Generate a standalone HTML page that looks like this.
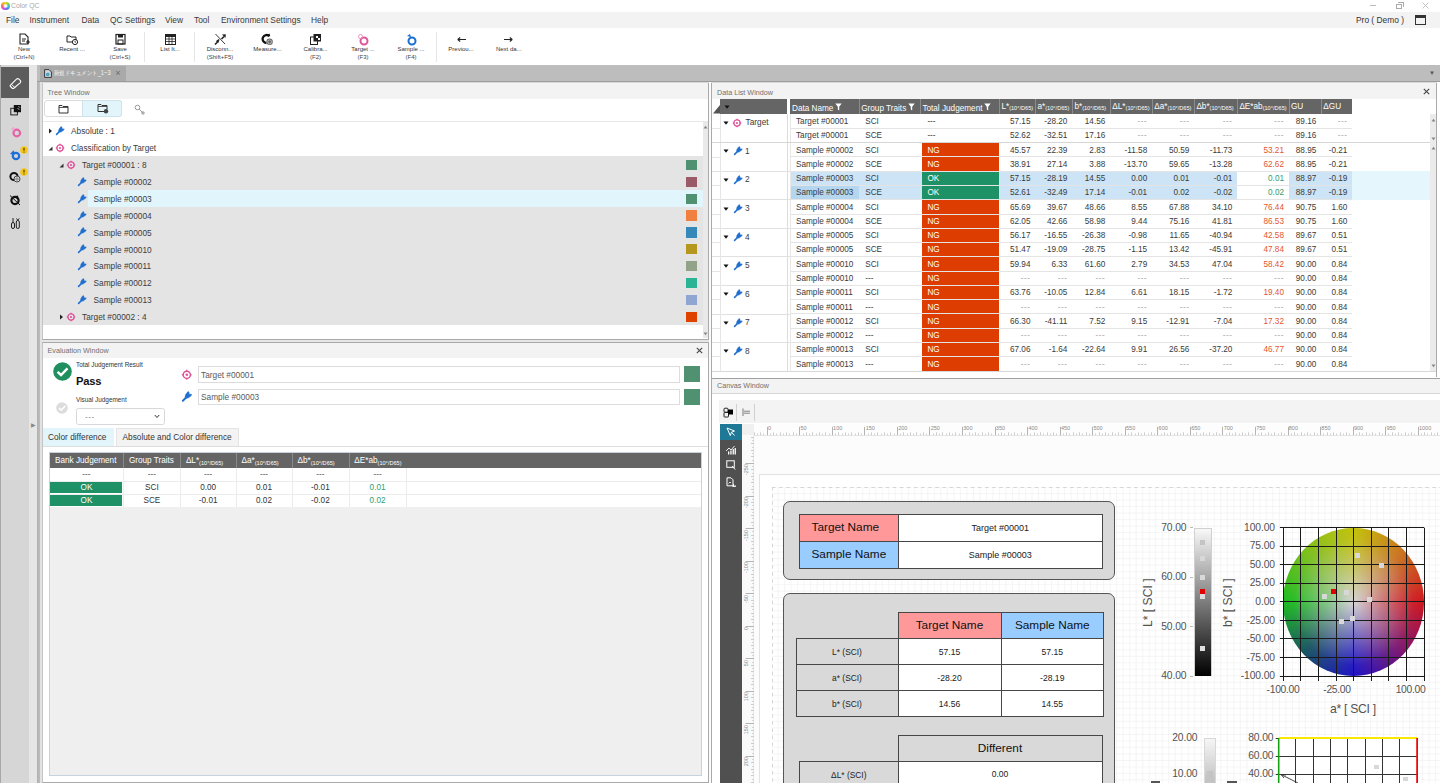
<!DOCTYPE html><html><head><meta charset="utf-8"><style>
*{box-sizing:border-box;margin:0;padding:0}
html,body{width:1440px;height:783px;overflow:hidden;background:#fff;font-family:"Liberation Sans",sans-serif;color:#333}
.a{position:absolute}
.t{position:absolute;white-space:nowrap;line-height:1}
.mi{position:absolute;top:16px;font-size:8.4px;color:#3a3a3a;line-height:9px;white-space:nowrap}
.tb{position:absolute;top:34px;width:60px;text-align:center;font-size:6px;color:#333;line-height:7.5px;white-space:nowrap}
.tbl{position:absolute;top:46px;width:60px;text-align:center;font-size:6px;color:#333;line-height:7.5px;white-space:nowrap}
.sep{position:absolute;top:32px;width:1px;height:30px;background:#e6e6e6}
.ph{position:absolute;background:#f3f3f3;font-size:7.2px;color:#707070}
.ph span{position:absolute;left:5px;top:4.5px;white-space:nowrap}
.tr{position:absolute;left:42px;height:17px;width:661px;font-size:8.3px;color:#3c3c3c}
.tr .tx{position:absolute;top:4px;white-space:nowrap}
.sw{position:absolute;left:645px;top:3px;width:11px;height:11px}
.dh{position:absolute;height:14.5px;background:#656565;color:#fff;font-size:8.2px;border-left:1px solid #8a8a8a}
.dh span{position:absolute;left:3px;top:3px;white-space:nowrap}
sub{font-size:5.6px;vertical-align:baseline;position:relative;top:1.3px}
.dr{position:absolute;height:14.25px;font-size:8.2px;color:#3a3a3a}
.c{position:absolute;top:0;height:14.25px;white-space:nowrap;line-height:14.25px}
.r{text-align:right;padding-right:5px}
.ng{background:#dd3d00;color:#fff}
.ok{background:#1f9166;color:#fff}
.red{color:#e4552e}
.grn{color:#2e9e6f}
.gy{color:#999}
</style></head><body>
<div class="a" style="left:1px;top:1.5px;width:8.5px;height:8.5px;border-radius:50%;background:radial-gradient(circle,#fff 0%,rgba(255,255,255,.9) 18%,rgba(255,255,255,0) 45%),conic-gradient(#f5d020,#7bd34a,#2bc0e0,#5a6ff0,#c25ae8,#f25a7a,#f5a030,#f5d020)"></div>
<div class="t" style="left:11px;top:3px;font-size:6.8px;color:#a8a8a8">Color QC</div>
<div class="a" style="left:1370px;top:5px;width:6px;height:1px;background:#bbb"></div>
<div class="a" style="left:1396px;top:3.5px;width:5.5px;height:5.5px;border:1px solid #aaa;background:#fff"></div>
<div class="a" style="left:1398px;top:1.5px;width:5.5px;height:5.5px;border-top:1px solid #aaa;border-right:1px solid #aaa"></div>
<svg class="a" style="left:1422px;top:2px" width="7" height="7" viewBox="0 0 7 7"><path d="M0.5 0.5L6.5 6.5M6.5 0.5L0.5 6.5" stroke="#bbb" stroke-width="0.9"/></svg>
<div class="a" style="left:0;top:12px;width:1440px;height:16px;background:#f3f3f3"></div>
<div class="mi" style="left:6px">File</div>
<div class="mi" style="left:29.5px">Instrument</div>
<div class="mi" style="left:81.5px">Data</div>
<div class="mi" style="left:110px">QC Settings</div>
<div class="mi" style="left:165px">View</div>
<div class="mi" style="left:194px">Tool</div>
<div class="mi" style="left:221px">Environment Settings</div>
<div class="mi" style="left:311px">Help</div>
<div class="t" style="left:1356px;top:16px;font-size:8.4px;color:#333">Pro ( Demo )</div>
<div class="a" style="left:1415px;top:15px;width:11px;height:10px;border:1.3px solid #333;border-top:3px solid #333"></div>
<svg class="a" style="left:17.5px;top:32.5px" width="13" height="13" viewBox="0 0 13 13"><path d="M2 1h5l3 3v7H2z" fill="none" stroke="#222" stroke-width="1.1"/><path d="M4 6h4M4 8h3" stroke="#222"/><path d="M8 9h4M10 7v4" stroke="#222" stroke-width="1.2"/></svg>
<div class="tb" style="left:-6px;top:46px">New</div>
<div class="tb" style="left:-6px;top:53.5px;color:#444">(Ctrl+N)</div>
<svg class="a" style="left:65.5px;top:32.5px" width="13" height="13" viewBox="0 0 13 13"><path d="M1 3h3l1 1h5v3M1 3v6h5" fill="none" stroke="#222" stroke-width="1"/><circle cx="9" cy="9" r="2.6" fill="#fff" stroke="#222"/><path d="M9 7.6v1.6h1" stroke="#222" stroke-width=".7" fill="none"/></svg>
<div class="tb" style="left:42px;top:46px">Recent ...</div>
<svg class="a" style="left:113.5px;top:32.5px" width="13" height="13" viewBox="0 0 13 13"><rect x="2" y="1.5" width="9" height="9.5" fill="none" stroke="#222" stroke-width="1.2"/><rect x="4" y="1.5" width="5" height="3" fill="#222"/><rect x="4" y="7" width="5" height="4" fill="none" stroke="#222"/></svg>
<div class="tb" style="left:90px;top:46px">Save</div>
<div class="tb" style="left:90px;top:53.5px;color:#444">(Ctrl+S)</div>
<svg class="a" style="left:163.5px;top:32.5px" width="13" height="13" viewBox="0 0 13 13"><rect x="1.5" y="1.5" width="10" height="10" fill="none" stroke="#222"/><rect x="1.5" y="1.5" width="10" height="2.5" fill="#222"/><path d="M1.5 6h10M1.5 8.5h10M5 4v7.5M8 4v7.5" stroke="#222" stroke-width=".8"/></svg>
<div class="tb" style="left:140px;top:46px">List It...</div>
<svg class="a" style="left:213.5px;top:32.5px" width="13" height="13" viewBox="0 0 13 13"><path d="M1.5 1L11 11" stroke="#222" stroke-width=".9"/><path d="M1 11.5L3 9.5M3.2 8.2L5.2 6.5" stroke="#222" stroke-width="1.6"/><circle cx="3.6" cy="8.6" r="1.3" fill="#222"/><path d="M7.5 6L10 3.5" stroke="#222" stroke-width="1.6"/><path d="M11.8 1.2L11.5 5L8 1.6Z" fill="#222"/></svg>
<div class="tb" style="left:190px;top:46px">Disconn...</div>
<div class="tb" style="left:190px;top:53.5px;color:#444">(Shift+F5)</div>
<svg class="a" style="left:261.0px;top:32.5px" width="13" height="13" viewBox="0 0 13 13"><path d="M8.5 3.2A4 4 0 1 0 5.5 10" fill="none" stroke="#111" stroke-width="2.3"/><path d="M6 1.2L9 0.8L8.2 3.5Z" fill="#111"/><circle cx="8.6" cy="8.8" r="3.2" fill="#666"/><circle cx="8.6" cy="8.8" r="1.9" fill="none" stroke="#ddd" stroke-width=".7"/></svg>
<div class="tb" style="left:237.5px;top:46px">Measure...</div>
<svg class="a" style="left:309.0px;top:32.5px" width="13" height="13" viewBox="0 0 13 13"><rect x="1.5" y="4" width="7" height="7.5" fill="#fff" stroke="#222"/><rect x="4.5" y="1" width="7.5" height="7.5" fill="#222"/><path d="M7 3h2v2h-2zM9 5h2v2h-2z" fill="#fff"/></svg>
<div class="tb" style="left:285.5px;top:46px">Calibra...</div>
<div class="tb" style="left:285.5px;top:53.5px;color:#444">(F2)</div>
<svg class="a" style="left:356.5px;top:32.5px" width="13" height="13" viewBox="0 0 13 13"><circle cx="7" cy="8" r="3.5" fill="none" stroke="#e0559a" stroke-width="2"/><circle cx="3.5" cy="3.5" r="2" fill="none" stroke="#e895bd" stroke-width="1"/></svg>
<div class="tb" style="left:333px;top:46px">Target ...</div>
<div class="tb" style="left:333px;top:53.5px;color:#444">(F3)</div>
<svg class="a" style="left:404.5px;top:32.5px" width="13" height="13" viewBox="0 0 13 13"><circle cx="7" cy="8" r="3.5" fill="none" stroke="#1a6fd1" stroke-width="2"/><path d="M2 3l3-2 1 3z" fill="#1a6fd1"/></svg>
<div class="tb" style="left:381px;top:46px">Sample ...</div>
<div class="tb" style="left:381px;top:53.5px;color:#444">(F4)</div>
<svg class="a" style="left:454.5px;top:32.5px" width="13" height="13" viewBox="0 0 13 13"><path d="M2.5 6.5h8.5M2.8 6.5l2.4-2M2.8 6.5l2.4 2" stroke="#222" stroke-width="1.1" fill="none"/></svg>
<div class="tb" style="left:431px;top:46px">Previou...</div>
<svg class="a" style="left:502.25px;top:32.5px" width="13" height="13" viewBox="0 0 13 13"><path d="M2 6.5h8.5M10.2 6.5l-2.4-2M10.2 6.5l-2.4 2" stroke="#222" stroke-width="1.1" fill="none"/></svg>
<div class="tb" style="left:478.75px;top:46px">Next da...</div>
<div class="sep" style="left:144px"></div>
<div class="sep" style="left:194px"></div>
<div class="sep" style="left:435.5px"></div>
<div class="a" style="left:0;top:65px;width:1440px;height:17px;background:#bdbdbd;border-bottom:1px solid #9c9c9c"></div>
<div class="a" style="left:40px;top:66px;width:86px;height:15px;background:#a9a9a9"></div>
<svg class="a" style="left:43.5px;top:69px" width="8" height="9" viewBox="0 0 8 9"><path d="M0.6 0.6H5L7.4 3V8.4H0.6Z" fill="#cfd8dc" stroke="#3a3a3a" stroke-width="1"/><path d="M2 4.5L4 3.5L5.8 5L4.5 7.2L2.2 6.8Z" fill="#3b9bd0"/><path d="M3 5L4.5 6" stroke="#7cc04b" stroke-width="1"/></svg>
<div class="t" style="left:54px;top:70.3px;font-size:6.3px;color:#f4f4f4;transform:scaleX(0.91);transform-origin:0 0">新規ドキュメント_1~3</div>
<div class="t" style="left:115.5px;top:69px;font-size:8.5px;color:#6a6a6a">×</div>
<div class="t" style="left:1429px;top:70px;font-size:6px;color:#555">▼</div>
<div class="a" style="left:0;top:65px;width:29px;height:718px;background:#d6d6d6;border-left:1px solid #a8a8a8"></div>
<div class="a" style="left:1px;top:66.5px;width:28px;height:31.5px;background:#5c5c5c"></div>
<div class="a" style="left:29px;top:65px;width:8px;height:718px;background:#e6e6e6"></div>
<div class="a" style="left:37px;top:82px;width:3px;height:701px;background:linear-gradient(90deg,#b0b0b0,#bdbdbd)"></div><div class="a" style="left:40px;top:82px;width:1.5px;height:701px;background:#e2e2e2"></div>
<div class="t" style="left:31px;top:422px;font-size:6px;color:#888">▶</div>
<div class="a" style="left:41.5px;top:82px;width:667.5px;height:258px;background:#fff;border:1px solid #a9a9a9;border-top:none;border-left-color:#c4c4c4"></div>
<div class="ph" style="left:42.5px;top:83px;width:665.5px;height:16px"><span>Tree Window</span></div>
<div class="a" style="left:43.8px;top:100.4px;width:78px;height:17px;border:1px solid #dcdcdc;border-radius:3px;background:#fff"></div>
<div class="a" style="left:82.4px;top:100.4px;width:39.4px;height:17px;border:1px solid #cfe3ea;border-radius:0 3px 3px 0;background:#e2f5fb"></div>
<svg class="a" style="left:58px;top:103.5px" width="11" height="10" viewBox="0 0 11 10"><path d="M1 1.5h3l1 1h5v6.5H1z" fill="none" stroke="#333" stroke-width="1"/><path d="M1 3.5h9" stroke="#333" stroke-width=".8"/></svg>
<svg class="a" style="left:96.5px;top:103px" width="12" height="11" viewBox="0 0 12 11"><path d="M1 1.5h3l1 1h5v4M1 1.5v7h6" fill="none" stroke="#333" stroke-width="1"/><path d="M1 3.5h9" stroke="#333" stroke-width=".8"/><circle cx="9" cy="8.3" r="2.2" fill="#444"/></svg>
<svg class="a" style="left:134px;top:103.5px" width="12" height="11" viewBox="0 0 12 11"><circle cx="3.5" cy="3.5" r="2.3" fill="none" stroke="#999" stroke-width="1"/><path d="M5.2 5.2L9 9M9 7v4M7 9h4" stroke="#999" stroke-width="1"/></svg>
<div class="a" style="left:42.5px;top:121px;width:665.5px;height:1px;background:#e8e8e8"></div>
<div class="a" style="left:703px;top:122px;width:5.2px;height:216px;background:#e9e9e9"></div>
<svg class="a" style="left:703px;top:125px" width="5" height="4" viewBox="0 0 5 4"><path d="M0.5 3.5H4.5L2.5 0.8Z" fill="#888"/></svg>
<svg class="a" style="left:703px;top:332px" width="5" height="4" viewBox="0 0 5 4"><path d="M0.5 0.5H4.5L2.5 3.2Z" fill="#888"/></svg>
<div class="a" style="left:42.5px;top:156.46px;width:660.5px;height:168.79999999999998px;background:#e4e4e4"></div>
<div class="a" style="left:88px;top:190.22px;width:615px;height:16.88px;background:#e0f6fc"></div>
<svg class="a" style="left:48px;top:128.14000000000001px" width="5" height="6" viewBox="0 0 5 6"><path d="M1 0.5L4 3L1 5.5Z" fill="#222"/></svg>
<svg class="a" style="left:55px;top:126.14000000000001px" width="10.0" height="10.0" viewBox="0 0 10 10"><path d="M1.6 8.4L4.2 5.8" stroke="#1f6fd0" stroke-width="1.6" stroke-linecap="round"/><path d="M3.4 5.2L4.0 3.0L6.0 0.5L6.9 0.9L7.1 2.8L9.3 2.9L8.6 4.3L6.1 6.1L4.4 6.3Z" fill="#1f6fd0" stroke="#1f6fd0" stroke-width=".4" stroke-linejoin="round"/></svg>
<div class="t" style="left:71px;top:127.34000000000002px;font-size:8.3px;color:#3c3c3c">Absolute : 1</div>
<svg class="a" style="left:47.5px;top:146.02px" width="5" height="5" viewBox="0 0 5 5"><path d="M4.5 0.5V4.5H0.5Z" fill="#333"/></svg>
<svg class="a" style="left:54.5px;top:143.02px" width="10.0" height="10.0" viewBox="0 0 10 10"><circle cx="5" cy="5" r="3.1" stroke="#e0559a" fill="none" stroke-width="1.3"/><circle cx="5" cy="5" r="1.1" fill="#e0559a"/><path d="M5 0.3L6 2L4 2ZM5 9.7L6 8L4 8ZM0.3 5L2 4V6ZM9.7 5L8 4V6Z" fill="#e0559a"/></svg>
<div class="t" style="left:71px;top:144.22px;font-size:8.3px;color:#3c3c3c">Classification by Target</div>
<svg class="a" style="left:58.5px;top:162.9px" width="5" height="5" viewBox="0 0 5 5"><path d="M4.5 0.5V4.5H0.5Z" fill="#333"/></svg>
<svg class="a" style="left:65.5px;top:159.9px" width="10.0" height="10.0" viewBox="0 0 10 10"><circle cx="5" cy="5" r="3.1" stroke="#e0559a" fill="none" stroke-width="1.3"/><circle cx="5" cy="5" r="1.1" fill="#e0559a"/><path d="M5 0.3L6 2L4 2ZM5 9.7L6 8L4 8ZM0.3 5L2 4V6ZM9.7 5L8 4V6Z" fill="#e0559a"/></svg>
<div class="t" style="left:82px;top:161.1px;font-size:8.3px;color:#3c3c3c">Target #00001 : 8</div>
<div class="a" style="left:686.4px;top:159.8px;width:10.7px;height:10.2px;background:#4f9170"></div>
<svg class="a" style="left:76.5px;top:176.78px" width="10.0" height="10.0" viewBox="0 0 10 10"><path d="M1.6 8.4L4.2 5.8" stroke="#1f6fd0" stroke-width="1.6" stroke-linecap="round"/><path d="M3.4 5.2L4.0 3.0L6.0 0.5L6.9 0.9L7.1 2.8L9.3 2.9L8.6 4.3L6.1 6.1L4.4 6.3Z" fill="#1f6fd0" stroke="#1f6fd0" stroke-width=".4" stroke-linejoin="round"/></svg>
<div class="t" style="left:93.5px;top:177.98px;font-size:8.3px;color:#3c3c3c">Sample #00002</div>
<div class="a" style="left:686.4px;top:176.68px;width:10.7px;height:10.2px;background:#9a5a66"></div>
<svg class="a" style="left:76.5px;top:193.66px" width="10.0" height="10.0" viewBox="0 0 10 10"><path d="M1.6 8.4L4.2 5.8" stroke="#1f6fd0" stroke-width="1.6" stroke-linecap="round"/><path d="M3.4 5.2L4.0 3.0L6.0 0.5L6.9 0.9L7.1 2.8L9.3 2.9L8.6 4.3L6.1 6.1L4.4 6.3Z" fill="#1f6fd0" stroke="#1f6fd0" stroke-width=".4" stroke-linejoin="round"/></svg>
<div class="t" style="left:93.5px;top:194.85999999999999px;font-size:8.3px;color:#3c3c3c">Sample #00003</div>
<div class="a" style="left:686.4px;top:193.56px;width:10.7px;height:10.2px;background:#4f9170"></div>
<svg class="a" style="left:76.5px;top:210.54px" width="10.0" height="10.0" viewBox="0 0 10 10"><path d="M1.6 8.4L4.2 5.8" stroke="#1f6fd0" stroke-width="1.6" stroke-linecap="round"/><path d="M3.4 5.2L4.0 3.0L6.0 0.5L6.9 0.9L7.1 2.8L9.3 2.9L8.6 4.3L6.1 6.1L4.4 6.3Z" fill="#1f6fd0" stroke="#1f6fd0" stroke-width=".4" stroke-linejoin="round"/></svg>
<div class="t" style="left:93.5px;top:211.73999999999998px;font-size:8.3px;color:#3c3c3c">Sample #00004</div>
<div class="a" style="left:686.4px;top:210.44px;width:10.7px;height:10.2px;background:#f08040"></div>
<svg class="a" style="left:76.5px;top:227.42000000000002px" width="10.0" height="10.0" viewBox="0 0 10 10"><path d="M1.6 8.4L4.2 5.8" stroke="#1f6fd0" stroke-width="1.6" stroke-linecap="round"/><path d="M3.4 5.2L4.0 3.0L6.0 0.5L6.9 0.9L7.1 2.8L9.3 2.9L8.6 4.3L6.1 6.1L4.4 6.3Z" fill="#1f6fd0" stroke="#1f6fd0" stroke-width=".4" stroke-linejoin="round"/></svg>
<div class="t" style="left:93.5px;top:228.62px;font-size:8.3px;color:#3c3c3c">Sample #00005</div>
<div class="a" style="left:686.4px;top:227.32000000000002px;width:10.7px;height:10.2px;background:#3588b8"></div>
<svg class="a" style="left:76.5px;top:244.3px" width="10.0" height="10.0" viewBox="0 0 10 10"><path d="M1.6 8.4L4.2 5.8" stroke="#1f6fd0" stroke-width="1.6" stroke-linecap="round"/><path d="M3.4 5.2L4.0 3.0L6.0 0.5L6.9 0.9L7.1 2.8L9.3 2.9L8.6 4.3L6.1 6.1L4.4 6.3Z" fill="#1f6fd0" stroke="#1f6fd0" stroke-width=".4" stroke-linejoin="round"/></svg>
<div class="t" style="left:93.5px;top:245.5px;font-size:8.3px;color:#3c3c3c">Sample #00010</div>
<div class="a" style="left:686.4px;top:244.20000000000002px;width:10.7px;height:10.2px;background:#b5961e"></div>
<svg class="a" style="left:76.5px;top:261.18px" width="10.0" height="10.0" viewBox="0 0 10 10"><path d="M1.6 8.4L4.2 5.8" stroke="#1f6fd0" stroke-width="1.6" stroke-linecap="round"/><path d="M3.4 5.2L4.0 3.0L6.0 0.5L6.9 0.9L7.1 2.8L9.3 2.9L8.6 4.3L6.1 6.1L4.4 6.3Z" fill="#1f6fd0" stroke="#1f6fd0" stroke-width=".4" stroke-linejoin="round"/></svg>
<div class="t" style="left:93.5px;top:262.38px;font-size:8.3px;color:#3c3c3c">Sample #00011</div>
<div class="a" style="left:686.4px;top:261.08px;width:10.7px;height:10.2px;background:#93a38a"></div>
<svg class="a" style="left:76.5px;top:278.06px" width="10.0" height="10.0" viewBox="0 0 10 10"><path d="M1.6 8.4L4.2 5.8" stroke="#1f6fd0" stroke-width="1.6" stroke-linecap="round"/><path d="M3.4 5.2L4.0 3.0L6.0 0.5L6.9 0.9L7.1 2.8L9.3 2.9L8.6 4.3L6.1 6.1L4.4 6.3Z" fill="#1f6fd0" stroke="#1f6fd0" stroke-width=".4" stroke-linejoin="round"/></svg>
<div class="t" style="left:93.5px;top:279.26px;font-size:8.3px;color:#3c3c3c">Sample #00012</div>
<div class="a" style="left:686.4px;top:277.96px;width:10.7px;height:10.2px;background:#2bb396"></div>
<svg class="a" style="left:76.5px;top:294.94px" width="10.0" height="10.0" viewBox="0 0 10 10"><path d="M1.6 8.4L4.2 5.8" stroke="#1f6fd0" stroke-width="1.6" stroke-linecap="round"/><path d="M3.4 5.2L4.0 3.0L6.0 0.5L6.9 0.9L7.1 2.8L9.3 2.9L8.6 4.3L6.1 6.1L4.4 6.3Z" fill="#1f6fd0" stroke="#1f6fd0" stroke-width=".4" stroke-linejoin="round"/></svg>
<div class="t" style="left:93.5px;top:296.14px;font-size:8.3px;color:#3c3c3c">Sample #00013</div>
<div class="a" style="left:686.4px;top:294.84px;width:10.7px;height:10.2px;background:#8fa6d3"></div>
<svg class="a" style="left:59px;top:313.82px" width="5" height="6" viewBox="0 0 5 6"><path d="M1 0.5L4 3L1 5.5Z" fill="#222"/></svg>
<svg class="a" style="left:65.5px;top:311.82px" width="10.0" height="10.0" viewBox="0 0 10 10"><circle cx="5" cy="5" r="3.1" stroke="#e0559a" fill="none" stroke-width="1.3"/><circle cx="5" cy="5" r="1.1" fill="#e0559a"/><path d="M5 0.3L6 2L4 2ZM5 9.7L6 8L4 8ZM0.3 5L2 4V6ZM9.7 5L8 4V6Z" fill="#e0559a"/></svg>
<div class="t" style="left:82px;top:313.02px;font-size:8.3px;color:#3c3c3c">Target #00002 : 4</div>
<div class="a" style="left:686.4px;top:311.71999999999997px;width:10.7px;height:10.2px;background:#de4200"></div>
<div class="a" style="left:41.5px;top:339.5px;width:667.5px;height:2.5px;background:#e6e6e6"></div>
<div class="a" style="left:41.5px;top:342px;width:667.5px;height:441px;background:#fff;border:1px solid #a9a9a9;border-left-color:#c4c4c4"></div>
<div class="ph" style="left:42.5px;top:343px;width:665.5px;height:14.5px"><span style="top:2.8px">Evaluation Window</span></div>
<svg class="a" style="left:695.7px;top:346.8px" width="7" height="7" viewBox="0 0 7 7"><path d="M0.8 0.8L6.2 6.2M6.2 0.8L0.8 6.2" stroke="#444" stroke-width="1.1"/></svg>
<svg class="a" style="left:52.5px;top:361.5px" width="19" height="19" viewBox="0 0 19 19"><circle cx="9.5" cy="9.5" r="9.3" fill="#1f8f5f"/><path d="M4.5 9.8L8 13L14.5 6.3" stroke="#fff" stroke-width="2.4" fill="none"/></svg>
<div class="t" style="left:76px;top:361.5px;font-size:6.4px;color:#333">Total Judgement Result</div>
<div class="t" style="left:76px;top:375.5px;font-size:11.2px;font-weight:bold;color:#111;letter-spacing:-0.2px">Pass</div>
<svg class="a" style="left:56px;top:402px" width="12" height="12" viewBox="0 0 12 12"><circle cx="6" cy="6" r="5.8" fill="#dcdcdc"/><path d="M3 6.2L5.2 8.2L9.2 4" stroke="#fff" stroke-width="1.6" fill="none"/></svg>
<div class="t" style="left:76px;top:396.5px;font-size:6.4px;color:#333">Visual Judgement</div>
<div class="a" style="left:76px;top:408px;width:88.5px;height:16.5px;border:1px solid #d8d8d8;border-radius:2.5px;background:#fff"></div>
<div class="t" style="left:85px;top:412.8px;font-size:8px;color:#777;letter-spacing:0.6px">---</div>
<svg class="a" style="left:153.5px;top:414px" width="6" height="5" viewBox="0 0 6 5"><path d="M0.8 1L3 3.5L5.2 1" stroke="#333" stroke-width="1" fill="none"/></svg>
<svg class="a" style="left:180.9px;top:368.5px" width="11.6" height="11.6" viewBox="0 0 10 10"><circle cx="5" cy="5" r="3.1" stroke="#e0559a" fill="none" stroke-width="1.3"/><circle cx="5" cy="5" r="1.1" fill="#e0559a"/><path d="M5 0.3L6 2L4 2ZM5 9.7L6 8L4 8ZM0.3 5L2 4V6ZM9.7 5L8 4V6Z" fill="#e0559a"/></svg>
<svg class="a" style="left:180.5px;top:390.5px" width="11.6" height="11.6" viewBox="0 0 10 10"><path d="M1.6 8.4L4.2 5.8" stroke="#1f6fd0" stroke-width="1.6" stroke-linecap="round"/><path d="M3.4 5.2L4.0 3.0L6.0 0.5L6.9 0.9L7.1 2.8L9.3 2.9L8.6 4.3L6.1 6.1L4.4 6.3Z" fill="#1f6fd0" stroke="#1f6fd0" stroke-width=".4" stroke-linejoin="round"/></svg>
<div class="a" style="left:197.5px;top:366px;width:482px;height:16.6px;border:1px solid #dcdcdc;background:#fff"></div>
<div class="t" style="left:201px;top:370.5px;font-size:8.3px;color:#5a5a5a">Target #00001</div>
<div class="a" style="left:684px;top:366px;width:16px;height:16px;background:#4f9170"></div>
<div class="a" style="left:197.5px;top:389px;width:482px;height:15.5px;border:1px solid #dcdcdc;background:#fff"></div>
<div class="t" style="left:201px;top:393px;font-size:8.3px;color:#5a5a5a">Sample #00003</div>
<div class="a" style="left:684px;top:389px;width:16px;height:16px;background:#4f9170"></div>
<div class="a" style="left:43px;top:428px;width:71px;height:17.5px;background:#e2f5fb"></div>
<div class="t" style="left:48px;top:433px;font-size:8.3px;color:#333">Color difference</div>
<div class="a" style="left:116.4px;top:428px;width:123px;height:17.5px;background:#f3f3f3;border:1px solid #e4e4e4;border-bottom:none"></div>
<div class="t" style="left:122.5px;top:433px;font-size:8.3px;color:#333">Absolute and Color difference</div>
<div class="a" style="left:42.5px;top:445.5px;width:665.5px;height:1px;background:#dedede"></div>
<div class="a" style="left:49px;top:452px;width:652.5px;height:324px;background:#efefef;border:1px solid #c6d3df"></div>
<div class="a" style="left:50px;top:453px;width:650.5px;height:14.7px;background:#656565"></div>
<div class="a" style="left:50px;top:467.7px;width:650.5px;height:39px;background:#fff"></div>
<div class="t" style="left:55.0px;top:457.3px;font-size:8.2px;color:#fff">Bank Judgement</div>
<div class="t" style="left:128.9px;top:457.3px;font-size:8.2px;color:#fff">Group Traits</div>
<div class="a" style="left:123.4px;top:453px;width:1px;height:14.7px;background:#8a8a8a"></div>
<div class="t" style="left:185.9px;top:457.3px;font-size:8.2px;color:#fff">ΔL*<sub>(10°/D65)</sub></div>
<div class="a" style="left:180.4px;top:453px;width:1px;height:14.7px;background:#8a8a8a"></div>
<div class="t" style="left:241.5px;top:457.3px;font-size:8.2px;color:#fff">Δa*<sub>(10°/D65)</sub></div>
<div class="a" style="left:236px;top:453px;width:1px;height:14.7px;background:#8a8a8a"></div>
<div class="t" style="left:297.5px;top:457.3px;font-size:8.2px;color:#fff">Δb*<sub>(10°/D65)</sub></div>
<div class="a" style="left:292px;top:453px;width:1px;height:14.7px;background:#8a8a8a"></div>
<div class="t" style="left:354.3px;top:457.3px;font-size:8.2px;color:#fff">ΔE*ab<sub>(10°/D65)</sub></div>
<div class="a" style="left:348.8px;top:453px;width:1px;height:14.7px;background:#8a8a8a"></div>
<div class="a" style="left:123.4px;top:467.7px;width:1px;height:39px;background:#ececec"></div>
<div class="a" style="left:180.4px;top:467.7px;width:1px;height:39px;background:#ececec"></div>
<div class="a" style="left:236px;top:467.7px;width:1px;height:39px;background:#ececec"></div>
<div class="a" style="left:292px;top:467.7px;width:1px;height:39px;background:#ececec"></div>
<div class="a" style="left:348.8px;top:467.7px;width:1px;height:39px;background:#ececec"></div>
<div class="a" style="left:406.3px;top:467.7px;width:1px;height:39px;background:#ececec"></div>
<div class="a" style="left:50px;top:481px;width:650.5px;height:1px;background:#ececec"></div>
<div class="a" style="left:50px;top:494px;width:650.5px;height:1px;background:#ececec"></div>
<div class="t" style="left:49.5px;width:73.9px;text-align:center;top:470.7px;font-size:8.2px;color:#555">---</div>
<div class="t" style="left:123.4px;width:57.0px;text-align:center;top:470.7px;font-size:8.2px;color:#555">---</div>
<div class="t" style="left:180.4px;width:55.599999999999994px;text-align:center;top:470.7px;font-size:8.2px;color:#555">---</div>
<div class="t" style="left:236px;width:56px;text-align:center;top:470.7px;font-size:8.2px;color:#555">---</div>
<div class="t" style="left:292px;width:56.80000000000001px;text-align:center;top:470.7px;font-size:8.2px;color:#555">---</div>
<div class="t" style="left:348.8px;width:57.5px;text-align:center;top:470.7px;font-size:8.2px;color:#555">---</div>
<div class="a" style="left:50px;top:481.7px;width:72px;height:11.5px;background:#1f9166"></div>
<div class="t" style="left:49.5px;width:73.9px;text-align:center;top:483.7px;font-size:8.2px;color:#fff">OK</div>
<div class="t" style="left:123.4px;width:57.0px;text-align:center;top:483.7px;font-size:8.2px;color:#333">SCI</div>
<div class="t" style="left:180.4px;width:55.599999999999994px;text-align:center;top:483.7px;font-size:8.2px;color:#333">0.00</div>
<div class="t" style="left:236px;width:56px;text-align:center;top:483.7px;font-size:8.2px;color:#333">0.01</div>
<div class="t" style="left:292px;width:56.80000000000001px;text-align:center;top:483.7px;font-size:8.2px;color:#333">-0.01</div>
<div class="t" style="left:348.8px;width:57.5px;text-align:center;top:483.7px;font-size:8.2px;color:#2e9e6f">0.01</div>
<div class="a" style="left:50px;top:494.7px;width:72px;height:11.5px;background:#1f9166"></div>
<div class="t" style="left:49.5px;width:73.9px;text-align:center;top:496.7px;font-size:8.2px;color:#fff">OK</div>
<div class="t" style="left:123.4px;width:57.0px;text-align:center;top:496.7px;font-size:8.2px;color:#333">SCE</div>
<div class="t" style="left:180.4px;width:55.599999999999994px;text-align:center;top:496.7px;font-size:8.2px;color:#333">-0.01</div>
<div class="t" style="left:236px;width:56px;text-align:center;top:496.7px;font-size:8.2px;color:#333">0.02</div>
<div class="t" style="left:292px;width:56.80000000000001px;text-align:center;top:496.7px;font-size:8.2px;color:#333">-0.02</div>
<div class="t" style="left:348.8px;width:57.5px;text-align:center;top:496.7px;font-size:8.2px;color:#2e9e6f">0.02</div>
<div class="a" style="left:709px;top:82px;width:2.5px;height:701px;background:#fbfbfb"></div>
<div class="a" style="left:711px;top:82px;width:726px;height:296px;background:#fff;border:1px solid #a9a9a9;border-top:none"></div>
<div class="ph" style="left:712px;top:83px;width:724px;height:16px"><span>Data List Window</span></div>
<svg class="a" style="left:1423px;top:88.3px" width="7" height="7" viewBox="0 0 7 7"><path d="M0.8 0.8L6.2 6.2M6.2 0.8L0.8 6.2" stroke="#444" stroke-width="1.1"/></svg>
<svg class="a" style="left:712.5px;top:105px" width="7" height="8.5" viewBox="0 0 7 8.5"><path d="M7 0V8.5H0Z" fill="#555"/></svg>
<div class="a" style="left:720.4px;top:99.2px;width:67.1px;height:14.549999999999997px;background:#656565"></div>
<svg class="a" style="left:723.5px;top:103.5px" width="6" height="6" viewBox="0 0 6 6"><path d="M0.5 1.5H5.5L3 4.8Z" fill="#111"/></svg>
<div class="a" style="left:790px;top:99.2px;width:562.4000000000001px;height:14.549999999999997px;background:#656565"></div>
<div class="t" style="left:792px;top:103px;font-size:8.2px;color:#fff">Data Name<svg width="7" height="8" viewBox="0 0 7 8" style="vertical-align:-0.5px;margin-left:2px"><path d="M0.3 0.5H6.7L4.2 3.8V7.5L2.8 6.6V3.8Z" fill="#fff"/></svg></div>
<div class="a" style="left:858.7px;top:99.2px;width:1px;height:15.049999999999997px;background:#8c8c8c"></div>
<div class="t" style="left:861.2px;top:103px;font-size:8.2px;color:#fff">Group Traits<svg width="7" height="8" viewBox="0 0 7 8" style="vertical-align:-0.5px;margin-left:2px"><path d="M0.3 0.5H6.7L4.2 3.8V7.5L2.8 6.6V3.8Z" fill="#fff"/></svg></div>
<div class="a" style="left:919.9px;top:99.2px;width:1px;height:15.049999999999997px;background:#8c8c8c"></div>
<div class="t" style="left:922.4px;top:103px;font-size:8.2px;color:#fff">Total Judgement<svg width="7" height="8" viewBox="0 0 7 8" style="vertical-align:-0.5px;margin-left:2px"><path d="M0.3 0.5H6.7L4.2 3.8V7.5L2.8 6.6V3.8Z" fill="#fff"/></svg></div>
<div class="a" style="left:998.9px;top:99.2px;width:1px;height:15.049999999999997px;background:#8c8c8c"></div>
<div class="t" style="left:1001.4px;top:103px;font-size:8.2px;color:#fff">L*<sub>(10°/D65)</sub></div>
<div class="a" style="left:1035.0px;top:99.2px;width:1px;height:15.049999999999997px;background:#8c8c8c"></div>
<div class="t" style="left:1037.5px;top:103px;font-size:8.2px;color:#fff">a*<sub>(10°/D65)</sub></div>
<div class="a" style="left:1071.9px;top:99.2px;width:1px;height:15.049999999999997px;background:#8c8c8c"></div>
<div class="t" style="left:1074.4px;top:103px;font-size:8.2px;color:#fff">b*<sub>(10°/D65)</sub></div>
<div class="a" style="left:1109.8px;top:99.2px;width:1px;height:15.049999999999997px;background:#8c8c8c"></div>
<div class="t" style="left:1112.3px;top:103px;font-size:8.2px;color:#fff">ΔL*<sub>(10°/D65)</sub></div>
<div class="a" style="left:1151.7px;top:99.2px;width:1px;height:15.049999999999997px;background:#8c8c8c"></div>
<div class="t" style="left:1154.2px;top:103px;font-size:8.2px;color:#fff">Δa*<sub>(10°/D65)</sub></div>
<div class="a" style="left:1193.9px;top:99.2px;width:1px;height:15.049999999999997px;background:#8c8c8c"></div>
<div class="t" style="left:1196.4px;top:103px;font-size:8.2px;color:#fff">Δb*<sub>(10°/D65)</sub></div>
<div class="a" style="left:1236.9px;top:99.2px;width:1px;height:15.049999999999997px;background:#8c8c8c"></div>
<div class="t" style="left:1239.4px;top:103px;font-size:8.2px;color:#fff">ΔE*ab<sub>(10°/D65)</sub></div>
<div class="a" style="left:1288.5px;top:99.2px;width:1px;height:15.049999999999997px;background:#8c8c8c"></div>
<div class="t" style="left:1291px;top:103px;font-size:8.2px;color:#fff">GU</div>
<div class="a" style="left:1320.8px;top:99.2px;width:1px;height:15.049999999999997px;background:#8c8c8c"></div>
<div class="t" style="left:1323.3px;top:103px;font-size:8.2px;color:#fff">ΔGU</div>
<div class="a" style="left:790px;top:171.32999999999998px;width:447.4000000000001px;height:14.27px;background:#cce4f6"></div>
<div class="a" style="left:1289px;top:171.32999999999998px;width:63.40000000000009px;height:14.27px;background:#cce4f6"></div>
<div class="a" style="left:1352.4px;top:171.32999999999998px;width:77.59999999999991px;height:14.27px;background:#e5f6fc"></div>
<div class="a" style="left:790px;top:185.6px;width:447.4000000000001px;height:14.27px;background:#cce4f6"></div>
<div class="a" style="left:1289px;top:185.6px;width:63.40000000000009px;height:14.27px;background:#cce4f6"></div>
<div class="a" style="left:1352.4px;top:185.6px;width:77.59999999999991px;height:14.27px;background:#e5f6fc"></div>
<div class="a" style="left:790px;top:185.6px;width:69.20000000000005px;height:14.27px;background:#b4d6ef"></div>
<div class="t" style="left:796px;top:118.05px;font-size:8.2px;color:#3a3a3a">Target #00001</div>
<div class="t" style="left:865.2px;top:118.05px;font-size:8.2px;color:#3a3a3a">SCI</div>
<div class="t" style="left:927.4px;top:118.05px;font-size:8.2px;color:#3a3a3a">---</div>
<div class="t" style="left:999.4px;width:31.100000000000023px;text-align:right;top:118.05px;font-size:8.2px;color:#3a3a3a;">57.15</div>
<div class="t" style="left:1035.5px;width:31.90000000000009px;text-align:right;top:118.05px;font-size:8.2px;color:#3a3a3a;">-28.20</div>
<div class="t" style="left:1072.4px;width:32.899999999999864px;text-align:right;top:118.05px;font-size:8.2px;color:#3a3a3a;">14.56</div>
<div class="t" style="left:1110.3px;width:36.90000000000009px;text-align:right;top:118.05px;font-size:8.2px;color:#a8a8a8;letter-spacing:0.5px;">---</div>
<div class="t" style="left:1152.2px;width:37.200000000000045px;text-align:right;top:118.05px;font-size:8.2px;color:#a8a8a8;letter-spacing:0.5px;">---</div>
<div class="t" style="left:1194.4px;width:38.0px;text-align:right;top:118.05px;font-size:8.2px;color:#a8a8a8;letter-spacing:0.5px;">---</div>
<div class="t" style="left:1237.4px;width:46.59999999999991px;text-align:right;top:118.05px;font-size:8.2px;color:#a8a8a8;letter-spacing:0.5px;">---</div>
<div class="t" style="left:1289px;width:27.299999999999955px;text-align:right;top:118.05px;font-size:8.2px;color:#3a3a3a;">89.16</div>
<div class="t" style="left:1321.3px;width:26.100000000000136px;text-align:right;top:118.05px;font-size:8.2px;color:#a8a8a8;letter-spacing:0.5px;">---</div>
<div class="t" style="left:796px;top:132.32000000000002px;font-size:8.2px;color:#3a3a3a">Target #00001</div>
<div class="t" style="left:865.2px;top:132.32000000000002px;font-size:8.2px;color:#3a3a3a">SCE</div>
<div class="t" style="left:927.4px;top:132.32000000000002px;font-size:8.2px;color:#3a3a3a">---</div>
<div class="t" style="left:999.4px;width:31.100000000000023px;text-align:right;top:132.32000000000002px;font-size:8.2px;color:#3a3a3a;">52.62</div>
<div class="t" style="left:1035.5px;width:31.90000000000009px;text-align:right;top:132.32000000000002px;font-size:8.2px;color:#3a3a3a;">-32.51</div>
<div class="t" style="left:1072.4px;width:32.899999999999864px;text-align:right;top:132.32000000000002px;font-size:8.2px;color:#3a3a3a;">17.16</div>
<div class="t" style="left:1110.3px;width:36.90000000000009px;text-align:right;top:132.32000000000002px;font-size:8.2px;color:#a8a8a8;letter-spacing:0.5px;">---</div>
<div class="t" style="left:1152.2px;width:37.200000000000045px;text-align:right;top:132.32000000000002px;font-size:8.2px;color:#a8a8a8;letter-spacing:0.5px;">---</div>
<div class="t" style="left:1194.4px;width:38.0px;text-align:right;top:132.32000000000002px;font-size:8.2px;color:#a8a8a8;letter-spacing:0.5px;">---</div>
<div class="t" style="left:1237.4px;width:46.59999999999991px;text-align:right;top:132.32000000000002px;font-size:8.2px;color:#a8a8a8;letter-spacing:0.5px;">---</div>
<div class="t" style="left:1289px;width:27.299999999999955px;text-align:right;top:132.32000000000002px;font-size:8.2px;color:#3a3a3a;">89.16</div>
<div class="t" style="left:1321.3px;width:26.100000000000136px;text-align:right;top:132.32000000000002px;font-size:8.2px;color:#a8a8a8;letter-spacing:0.5px;">---</div>
<div class="t" style="left:796px;top:146.59px;font-size:8.2px;color:#3a3a3a">Sample #00002</div>
<div class="t" style="left:865.2px;top:146.59px;font-size:8.2px;color:#3a3a3a">SCI</div>
<div class="a" style="left:921.9px;top:142.79px;width:77.5px;height:14.27px;background:#dd3d00"></div>
<div class="t" style="left:927.4px;top:146.59px;font-size:8.2px;color:#fff">NG</div>
<div class="t" style="left:999.4px;width:31.100000000000023px;text-align:right;top:146.59px;font-size:8.2px;color:#3a3a3a;">45.57</div>
<div class="t" style="left:1035.5px;width:31.90000000000009px;text-align:right;top:146.59px;font-size:8.2px;color:#3a3a3a;">22.39</div>
<div class="t" style="left:1072.4px;width:32.899999999999864px;text-align:right;top:146.59px;font-size:8.2px;color:#3a3a3a;">2.83</div>
<div class="t" style="left:1110.3px;width:36.90000000000009px;text-align:right;top:146.59px;font-size:8.2px;color:#3a3a3a;">-11.58</div>
<div class="t" style="left:1152.2px;width:37.200000000000045px;text-align:right;top:146.59px;font-size:8.2px;color:#3a3a3a;">50.59</div>
<div class="t" style="left:1194.4px;width:38.0px;text-align:right;top:146.59px;font-size:8.2px;color:#3a3a3a;">-11.73</div>
<div class="t" style="left:1237.4px;width:46.59999999999991px;text-align:right;top:146.59px;font-size:8.2px;color:#e4552e;">53.21</div>
<div class="t" style="left:1289px;width:27.299999999999955px;text-align:right;top:146.59px;font-size:8.2px;color:#3a3a3a;">88.95</div>
<div class="t" style="left:1321.3px;width:26.100000000000136px;text-align:right;top:146.59px;font-size:8.2px;color:#3a3a3a;">-0.21</div>
<div class="t" style="left:796px;top:160.86px;font-size:8.2px;color:#3a3a3a">Sample #00002</div>
<div class="t" style="left:865.2px;top:160.86px;font-size:8.2px;color:#3a3a3a">SCE</div>
<div class="a" style="left:921.9px;top:157.06px;width:77.5px;height:14.27px;background:#dd3d00"></div>
<div class="t" style="left:927.4px;top:160.86px;font-size:8.2px;color:#fff">NG</div>
<div class="t" style="left:999.4px;width:31.100000000000023px;text-align:right;top:160.86px;font-size:8.2px;color:#3a3a3a;">38.91</div>
<div class="t" style="left:1035.5px;width:31.90000000000009px;text-align:right;top:160.86px;font-size:8.2px;color:#3a3a3a;">27.14</div>
<div class="t" style="left:1072.4px;width:32.899999999999864px;text-align:right;top:160.86px;font-size:8.2px;color:#3a3a3a;">3.88</div>
<div class="t" style="left:1110.3px;width:36.90000000000009px;text-align:right;top:160.86px;font-size:8.2px;color:#3a3a3a;">-13.70</div>
<div class="t" style="left:1152.2px;width:37.200000000000045px;text-align:right;top:160.86px;font-size:8.2px;color:#3a3a3a;">59.65</div>
<div class="t" style="left:1194.4px;width:38.0px;text-align:right;top:160.86px;font-size:8.2px;color:#3a3a3a;">-13.28</div>
<div class="t" style="left:1237.4px;width:46.59999999999991px;text-align:right;top:160.86px;font-size:8.2px;color:#e4552e;">62.62</div>
<div class="t" style="left:1289px;width:27.299999999999955px;text-align:right;top:160.86px;font-size:8.2px;color:#3a3a3a;">88.95</div>
<div class="t" style="left:1321.3px;width:26.100000000000136px;text-align:right;top:160.86px;font-size:8.2px;color:#3a3a3a;">-0.21</div>
<div class="t" style="left:796px;top:175.13px;font-size:8.2px;color:#3a3a3a">Sample #00003</div>
<div class="t" style="left:865.2px;top:175.13px;font-size:8.2px;color:#3a3a3a">SCI</div>
<div class="a" style="left:921.9px;top:171.32999999999998px;width:77.5px;height:14.27px;background:#1f9166"></div>
<div class="t" style="left:927.4px;top:175.13px;font-size:8.2px;color:#fff">OK</div>
<div class="t" style="left:999.4px;width:31.100000000000023px;text-align:right;top:175.13px;font-size:8.2px;color:#3a3a3a;">57.15</div>
<div class="t" style="left:1035.5px;width:31.90000000000009px;text-align:right;top:175.13px;font-size:8.2px;color:#3a3a3a;">-28.19</div>
<div class="t" style="left:1072.4px;width:32.899999999999864px;text-align:right;top:175.13px;font-size:8.2px;color:#3a3a3a;">14.55</div>
<div class="t" style="left:1110.3px;width:36.90000000000009px;text-align:right;top:175.13px;font-size:8.2px;color:#3a3a3a;">0.00</div>
<div class="t" style="left:1152.2px;width:37.200000000000045px;text-align:right;top:175.13px;font-size:8.2px;color:#3a3a3a;">0.01</div>
<div class="t" style="left:1194.4px;width:38.0px;text-align:right;top:175.13px;font-size:8.2px;color:#3a3a3a;">-0.01</div>
<div class="t" style="left:1237.4px;width:46.59999999999991px;text-align:right;top:175.13px;font-size:8.2px;color:#2e9e6f;">0.01</div>
<div class="t" style="left:1289px;width:27.299999999999955px;text-align:right;top:175.13px;font-size:8.2px;color:#3a3a3a;">88.97</div>
<div class="t" style="left:1321.3px;width:26.100000000000136px;text-align:right;top:175.13px;font-size:8.2px;color:#3a3a3a;">-0.19</div>
<div class="t" style="left:796px;top:189.4px;font-size:8.2px;color:#3a3a3a">Sample #00003</div>
<div class="t" style="left:865.2px;top:189.4px;font-size:8.2px;color:#3a3a3a">SCE</div>
<div class="a" style="left:921.9px;top:185.6px;width:77.5px;height:14.27px;background:#1f9166"></div>
<div class="t" style="left:927.4px;top:189.4px;font-size:8.2px;color:#fff">OK</div>
<div class="t" style="left:999.4px;width:31.100000000000023px;text-align:right;top:189.4px;font-size:8.2px;color:#3a3a3a;">52.61</div>
<div class="t" style="left:1035.5px;width:31.90000000000009px;text-align:right;top:189.4px;font-size:8.2px;color:#3a3a3a;">-32.49</div>
<div class="t" style="left:1072.4px;width:32.899999999999864px;text-align:right;top:189.4px;font-size:8.2px;color:#3a3a3a;">17.14</div>
<div class="t" style="left:1110.3px;width:36.90000000000009px;text-align:right;top:189.4px;font-size:8.2px;color:#3a3a3a;">-0.01</div>
<div class="t" style="left:1152.2px;width:37.200000000000045px;text-align:right;top:189.4px;font-size:8.2px;color:#3a3a3a;">0.02</div>
<div class="t" style="left:1194.4px;width:38.0px;text-align:right;top:189.4px;font-size:8.2px;color:#3a3a3a;">-0.02</div>
<div class="t" style="left:1237.4px;width:46.59999999999991px;text-align:right;top:189.4px;font-size:8.2px;color:#2e9e6f;">0.02</div>
<div class="t" style="left:1289px;width:27.299999999999955px;text-align:right;top:189.4px;font-size:8.2px;color:#3a3a3a;">88.97</div>
<div class="t" style="left:1321.3px;width:26.100000000000136px;text-align:right;top:189.4px;font-size:8.2px;color:#3a3a3a;">-0.19</div>
<div class="t" style="left:796px;top:203.67000000000002px;font-size:8.2px;color:#3a3a3a">Sample #00004</div>
<div class="t" style="left:865.2px;top:203.67000000000002px;font-size:8.2px;color:#3a3a3a">SCI</div>
<div class="a" style="left:921.9px;top:199.87px;width:77.5px;height:14.27px;background:#dd3d00"></div>
<div class="t" style="left:927.4px;top:203.67000000000002px;font-size:8.2px;color:#fff">NG</div>
<div class="t" style="left:999.4px;width:31.100000000000023px;text-align:right;top:203.67000000000002px;font-size:8.2px;color:#3a3a3a;">65.69</div>
<div class="t" style="left:1035.5px;width:31.90000000000009px;text-align:right;top:203.67000000000002px;font-size:8.2px;color:#3a3a3a;">39.67</div>
<div class="t" style="left:1072.4px;width:32.899999999999864px;text-align:right;top:203.67000000000002px;font-size:8.2px;color:#3a3a3a;">48.66</div>
<div class="t" style="left:1110.3px;width:36.90000000000009px;text-align:right;top:203.67000000000002px;font-size:8.2px;color:#3a3a3a;">8.55</div>
<div class="t" style="left:1152.2px;width:37.200000000000045px;text-align:right;top:203.67000000000002px;font-size:8.2px;color:#3a3a3a;">67.88</div>
<div class="t" style="left:1194.4px;width:38.0px;text-align:right;top:203.67000000000002px;font-size:8.2px;color:#3a3a3a;">34.10</div>
<div class="t" style="left:1237.4px;width:46.59999999999991px;text-align:right;top:203.67000000000002px;font-size:8.2px;color:#e4552e;">76.44</div>
<div class="t" style="left:1289px;width:27.299999999999955px;text-align:right;top:203.67000000000002px;font-size:8.2px;color:#3a3a3a;">90.75</div>
<div class="t" style="left:1321.3px;width:26.100000000000136px;text-align:right;top:203.67000000000002px;font-size:8.2px;color:#3a3a3a;">1.60</div>
<div class="t" style="left:796px;top:217.94px;font-size:8.2px;color:#3a3a3a">Sample #00004</div>
<div class="t" style="left:865.2px;top:217.94px;font-size:8.2px;color:#3a3a3a">SCE</div>
<div class="a" style="left:921.9px;top:214.14px;width:77.5px;height:14.27px;background:#dd3d00"></div>
<div class="t" style="left:927.4px;top:217.94px;font-size:8.2px;color:#fff">NG</div>
<div class="t" style="left:999.4px;width:31.100000000000023px;text-align:right;top:217.94px;font-size:8.2px;color:#3a3a3a;">62.05</div>
<div class="t" style="left:1035.5px;width:31.90000000000009px;text-align:right;top:217.94px;font-size:8.2px;color:#3a3a3a;">42.66</div>
<div class="t" style="left:1072.4px;width:32.899999999999864px;text-align:right;top:217.94px;font-size:8.2px;color:#3a3a3a;">58.98</div>
<div class="t" style="left:1110.3px;width:36.90000000000009px;text-align:right;top:217.94px;font-size:8.2px;color:#3a3a3a;">9.44</div>
<div class="t" style="left:1152.2px;width:37.200000000000045px;text-align:right;top:217.94px;font-size:8.2px;color:#3a3a3a;">75.16</div>
<div class="t" style="left:1194.4px;width:38.0px;text-align:right;top:217.94px;font-size:8.2px;color:#3a3a3a;">41.81</div>
<div class="t" style="left:1237.4px;width:46.59999999999991px;text-align:right;top:217.94px;font-size:8.2px;color:#e4552e;">86.53</div>
<div class="t" style="left:1289px;width:27.299999999999955px;text-align:right;top:217.94px;font-size:8.2px;color:#3a3a3a;">90.75</div>
<div class="t" style="left:1321.3px;width:26.100000000000136px;text-align:right;top:217.94px;font-size:8.2px;color:#3a3a3a;">1.60</div>
<div class="t" style="left:796px;top:232.21px;font-size:8.2px;color:#3a3a3a">Sample #00005</div>
<div class="t" style="left:865.2px;top:232.21px;font-size:8.2px;color:#3a3a3a">SCI</div>
<div class="a" style="left:921.9px;top:228.41px;width:77.5px;height:14.27px;background:#dd3d00"></div>
<div class="t" style="left:927.4px;top:232.21px;font-size:8.2px;color:#fff">NG</div>
<div class="t" style="left:999.4px;width:31.100000000000023px;text-align:right;top:232.21px;font-size:8.2px;color:#3a3a3a;">56.17</div>
<div class="t" style="left:1035.5px;width:31.90000000000009px;text-align:right;top:232.21px;font-size:8.2px;color:#3a3a3a;">-16.55</div>
<div class="t" style="left:1072.4px;width:32.899999999999864px;text-align:right;top:232.21px;font-size:8.2px;color:#3a3a3a;">-26.38</div>
<div class="t" style="left:1110.3px;width:36.90000000000009px;text-align:right;top:232.21px;font-size:8.2px;color:#3a3a3a;">-0.98</div>
<div class="t" style="left:1152.2px;width:37.200000000000045px;text-align:right;top:232.21px;font-size:8.2px;color:#3a3a3a;">11.65</div>
<div class="t" style="left:1194.4px;width:38.0px;text-align:right;top:232.21px;font-size:8.2px;color:#3a3a3a;">-40.94</div>
<div class="t" style="left:1237.4px;width:46.59999999999991px;text-align:right;top:232.21px;font-size:8.2px;color:#e4552e;">42.58</div>
<div class="t" style="left:1289px;width:27.299999999999955px;text-align:right;top:232.21px;font-size:8.2px;color:#3a3a3a;">89.67</div>
<div class="t" style="left:1321.3px;width:26.100000000000136px;text-align:right;top:232.21px;font-size:8.2px;color:#3a3a3a;">0.51</div>
<div class="t" style="left:796px;top:246.48000000000002px;font-size:8.2px;color:#3a3a3a">Sample #00005</div>
<div class="t" style="left:865.2px;top:246.48000000000002px;font-size:8.2px;color:#3a3a3a">SCE</div>
<div class="a" style="left:921.9px;top:242.68px;width:77.5px;height:14.27px;background:#dd3d00"></div>
<div class="t" style="left:927.4px;top:246.48000000000002px;font-size:8.2px;color:#fff">NG</div>
<div class="t" style="left:999.4px;width:31.100000000000023px;text-align:right;top:246.48000000000002px;font-size:8.2px;color:#3a3a3a;">51.47</div>
<div class="t" style="left:1035.5px;width:31.90000000000009px;text-align:right;top:246.48000000000002px;font-size:8.2px;color:#3a3a3a;">-19.09</div>
<div class="t" style="left:1072.4px;width:32.899999999999864px;text-align:right;top:246.48000000000002px;font-size:8.2px;color:#3a3a3a;">-28.75</div>
<div class="t" style="left:1110.3px;width:36.90000000000009px;text-align:right;top:246.48000000000002px;font-size:8.2px;color:#3a3a3a;">-1.15</div>
<div class="t" style="left:1152.2px;width:37.200000000000045px;text-align:right;top:246.48000000000002px;font-size:8.2px;color:#3a3a3a;">13.42</div>
<div class="t" style="left:1194.4px;width:38.0px;text-align:right;top:246.48000000000002px;font-size:8.2px;color:#3a3a3a;">-45.91</div>
<div class="t" style="left:1237.4px;width:46.59999999999991px;text-align:right;top:246.48000000000002px;font-size:8.2px;color:#e4552e;">47.84</div>
<div class="t" style="left:1289px;width:27.299999999999955px;text-align:right;top:246.48000000000002px;font-size:8.2px;color:#3a3a3a;">89.67</div>
<div class="t" style="left:1321.3px;width:26.100000000000136px;text-align:right;top:246.48000000000002px;font-size:8.2px;color:#3a3a3a;">0.51</div>
<div class="t" style="left:796px;top:260.75px;font-size:8.2px;color:#3a3a3a">Sample #00010</div>
<div class="t" style="left:865.2px;top:260.75px;font-size:8.2px;color:#3a3a3a">SCI</div>
<div class="a" style="left:921.9px;top:256.95px;width:77.5px;height:14.27px;background:#dd3d00"></div>
<div class="t" style="left:927.4px;top:260.75px;font-size:8.2px;color:#fff">NG</div>
<div class="t" style="left:999.4px;width:31.100000000000023px;text-align:right;top:260.75px;font-size:8.2px;color:#3a3a3a;">59.94</div>
<div class="t" style="left:1035.5px;width:31.90000000000009px;text-align:right;top:260.75px;font-size:8.2px;color:#3a3a3a;">6.33</div>
<div class="t" style="left:1072.4px;width:32.899999999999864px;text-align:right;top:260.75px;font-size:8.2px;color:#3a3a3a;">61.60</div>
<div class="t" style="left:1110.3px;width:36.90000000000009px;text-align:right;top:260.75px;font-size:8.2px;color:#3a3a3a;">2.79</div>
<div class="t" style="left:1152.2px;width:37.200000000000045px;text-align:right;top:260.75px;font-size:8.2px;color:#3a3a3a;">34.53</div>
<div class="t" style="left:1194.4px;width:38.0px;text-align:right;top:260.75px;font-size:8.2px;color:#3a3a3a;">47.04</div>
<div class="t" style="left:1237.4px;width:46.59999999999991px;text-align:right;top:260.75px;font-size:8.2px;color:#e4552e;">58.42</div>
<div class="t" style="left:1289px;width:27.299999999999955px;text-align:right;top:260.75px;font-size:8.2px;color:#3a3a3a;">90.00</div>
<div class="t" style="left:1321.3px;width:26.100000000000136px;text-align:right;top:260.75px;font-size:8.2px;color:#3a3a3a;">0.84</div>
<div class="t" style="left:796px;top:275.02000000000004px;font-size:8.2px;color:#3a3a3a">Sample #00010</div>
<div class="t" style="left:865.2px;top:275.02000000000004px;font-size:8.2px;color:#3a3a3a">---</div>
<div class="a" style="left:921.9px;top:271.22px;width:77.5px;height:14.27px;background:#dd3d00"></div>
<div class="t" style="left:927.4px;top:275.02000000000004px;font-size:8.2px;color:#fff">NG</div>
<div class="t" style="left:999.4px;width:31.100000000000023px;text-align:right;top:275.02000000000004px;font-size:8.2px;color:#a8a8a8;letter-spacing:0.5px;">---</div>
<div class="t" style="left:1035.5px;width:31.90000000000009px;text-align:right;top:275.02000000000004px;font-size:8.2px;color:#a8a8a8;letter-spacing:0.5px;">---</div>
<div class="t" style="left:1072.4px;width:32.899999999999864px;text-align:right;top:275.02000000000004px;font-size:8.2px;color:#a8a8a8;letter-spacing:0.5px;">---</div>
<div class="t" style="left:1110.3px;width:36.90000000000009px;text-align:right;top:275.02000000000004px;font-size:8.2px;color:#a8a8a8;letter-spacing:0.5px;">---</div>
<div class="t" style="left:1152.2px;width:37.200000000000045px;text-align:right;top:275.02000000000004px;font-size:8.2px;color:#a8a8a8;letter-spacing:0.5px;">---</div>
<div class="t" style="left:1194.4px;width:38.0px;text-align:right;top:275.02000000000004px;font-size:8.2px;color:#a8a8a8;letter-spacing:0.5px;">---</div>
<div class="t" style="left:1237.4px;width:46.59999999999991px;text-align:right;top:275.02000000000004px;font-size:8.2px;color:#a8a8a8;letter-spacing:0.5px;">---</div>
<div class="t" style="left:1289px;width:27.299999999999955px;text-align:right;top:275.02000000000004px;font-size:8.2px;color:#3a3a3a;">90.00</div>
<div class="t" style="left:1321.3px;width:26.100000000000136px;text-align:right;top:275.02000000000004px;font-size:8.2px;color:#3a3a3a;">0.84</div>
<div class="t" style="left:796px;top:289.29px;font-size:8.2px;color:#3a3a3a">Sample #00011</div>
<div class="t" style="left:865.2px;top:289.29px;font-size:8.2px;color:#3a3a3a">SCI</div>
<div class="a" style="left:921.9px;top:285.49px;width:77.5px;height:14.27px;background:#dd3d00"></div>
<div class="t" style="left:927.4px;top:289.29px;font-size:8.2px;color:#fff">NG</div>
<div class="t" style="left:999.4px;width:31.100000000000023px;text-align:right;top:289.29px;font-size:8.2px;color:#3a3a3a;">63.76</div>
<div class="t" style="left:1035.5px;width:31.90000000000009px;text-align:right;top:289.29px;font-size:8.2px;color:#3a3a3a;">-10.05</div>
<div class="t" style="left:1072.4px;width:32.899999999999864px;text-align:right;top:289.29px;font-size:8.2px;color:#3a3a3a;">12.84</div>
<div class="t" style="left:1110.3px;width:36.90000000000009px;text-align:right;top:289.29px;font-size:8.2px;color:#3a3a3a;">6.61</div>
<div class="t" style="left:1152.2px;width:37.200000000000045px;text-align:right;top:289.29px;font-size:8.2px;color:#3a3a3a;">18.15</div>
<div class="t" style="left:1194.4px;width:38.0px;text-align:right;top:289.29px;font-size:8.2px;color:#3a3a3a;">-1.72</div>
<div class="t" style="left:1237.4px;width:46.59999999999991px;text-align:right;top:289.29px;font-size:8.2px;color:#e4552e;">19.40</div>
<div class="t" style="left:1289px;width:27.299999999999955px;text-align:right;top:289.29px;font-size:8.2px;color:#3a3a3a;">90.00</div>
<div class="t" style="left:1321.3px;width:26.100000000000136px;text-align:right;top:289.29px;font-size:8.2px;color:#3a3a3a;">0.84</div>
<div class="t" style="left:796px;top:303.56px;font-size:8.2px;color:#3a3a3a">Sample #00011</div>
<div class="t" style="left:865.2px;top:303.56px;font-size:8.2px;color:#3a3a3a">---</div>
<div class="a" style="left:921.9px;top:299.76px;width:77.5px;height:14.27px;background:#dd3d00"></div>
<div class="t" style="left:927.4px;top:303.56px;font-size:8.2px;color:#fff">NG</div>
<div class="t" style="left:999.4px;width:31.100000000000023px;text-align:right;top:303.56px;font-size:8.2px;color:#a8a8a8;letter-spacing:0.5px;">---</div>
<div class="t" style="left:1035.5px;width:31.90000000000009px;text-align:right;top:303.56px;font-size:8.2px;color:#a8a8a8;letter-spacing:0.5px;">---</div>
<div class="t" style="left:1072.4px;width:32.899999999999864px;text-align:right;top:303.56px;font-size:8.2px;color:#a8a8a8;letter-spacing:0.5px;">---</div>
<div class="t" style="left:1110.3px;width:36.90000000000009px;text-align:right;top:303.56px;font-size:8.2px;color:#a8a8a8;letter-spacing:0.5px;">---</div>
<div class="t" style="left:1152.2px;width:37.200000000000045px;text-align:right;top:303.56px;font-size:8.2px;color:#a8a8a8;letter-spacing:0.5px;">---</div>
<div class="t" style="left:1194.4px;width:38.0px;text-align:right;top:303.56px;font-size:8.2px;color:#a8a8a8;letter-spacing:0.5px;">---</div>
<div class="t" style="left:1237.4px;width:46.59999999999991px;text-align:right;top:303.56px;font-size:8.2px;color:#a8a8a8;letter-spacing:0.5px;">---</div>
<div class="t" style="left:1289px;width:27.299999999999955px;text-align:right;top:303.56px;font-size:8.2px;color:#3a3a3a;">90.00</div>
<div class="t" style="left:1321.3px;width:26.100000000000136px;text-align:right;top:303.56px;font-size:8.2px;color:#3a3a3a;">0.84</div>
<div class="t" style="left:796px;top:317.83px;font-size:8.2px;color:#3a3a3a">Sample #00012</div>
<div class="t" style="left:865.2px;top:317.83px;font-size:8.2px;color:#3a3a3a">SCI</div>
<div class="a" style="left:921.9px;top:314.03px;width:77.5px;height:14.27px;background:#dd3d00"></div>
<div class="t" style="left:927.4px;top:317.83px;font-size:8.2px;color:#fff">NG</div>
<div class="t" style="left:999.4px;width:31.100000000000023px;text-align:right;top:317.83px;font-size:8.2px;color:#3a3a3a;">66.30</div>
<div class="t" style="left:1035.5px;width:31.90000000000009px;text-align:right;top:317.83px;font-size:8.2px;color:#3a3a3a;">-41.11</div>
<div class="t" style="left:1072.4px;width:32.899999999999864px;text-align:right;top:317.83px;font-size:8.2px;color:#3a3a3a;">7.52</div>
<div class="t" style="left:1110.3px;width:36.90000000000009px;text-align:right;top:317.83px;font-size:8.2px;color:#3a3a3a;">9.15</div>
<div class="t" style="left:1152.2px;width:37.200000000000045px;text-align:right;top:317.83px;font-size:8.2px;color:#3a3a3a;">-12.91</div>
<div class="t" style="left:1194.4px;width:38.0px;text-align:right;top:317.83px;font-size:8.2px;color:#3a3a3a;">-7.04</div>
<div class="t" style="left:1237.4px;width:46.59999999999991px;text-align:right;top:317.83px;font-size:8.2px;color:#e4552e;">17.32</div>
<div class="t" style="left:1289px;width:27.299999999999955px;text-align:right;top:317.83px;font-size:8.2px;color:#3a3a3a;">90.00</div>
<div class="t" style="left:1321.3px;width:26.100000000000136px;text-align:right;top:317.83px;font-size:8.2px;color:#3a3a3a;">0.84</div>
<div class="t" style="left:796px;top:332.09999999999997px;font-size:8.2px;color:#3a3a3a">Sample #00012</div>
<div class="t" style="left:865.2px;top:332.09999999999997px;font-size:8.2px;color:#3a3a3a">---</div>
<div class="a" style="left:921.9px;top:328.29999999999995px;width:77.5px;height:14.27px;background:#dd3d00"></div>
<div class="t" style="left:927.4px;top:332.09999999999997px;font-size:8.2px;color:#fff">NG</div>
<div class="t" style="left:999.4px;width:31.100000000000023px;text-align:right;top:332.09999999999997px;font-size:8.2px;color:#a8a8a8;letter-spacing:0.5px;">---</div>
<div class="t" style="left:1035.5px;width:31.90000000000009px;text-align:right;top:332.09999999999997px;font-size:8.2px;color:#a8a8a8;letter-spacing:0.5px;">---</div>
<div class="t" style="left:1072.4px;width:32.899999999999864px;text-align:right;top:332.09999999999997px;font-size:8.2px;color:#a8a8a8;letter-spacing:0.5px;">---</div>
<div class="t" style="left:1110.3px;width:36.90000000000009px;text-align:right;top:332.09999999999997px;font-size:8.2px;color:#a8a8a8;letter-spacing:0.5px;">---</div>
<div class="t" style="left:1152.2px;width:37.200000000000045px;text-align:right;top:332.09999999999997px;font-size:8.2px;color:#a8a8a8;letter-spacing:0.5px;">---</div>
<div class="t" style="left:1194.4px;width:38.0px;text-align:right;top:332.09999999999997px;font-size:8.2px;color:#a8a8a8;letter-spacing:0.5px;">---</div>
<div class="t" style="left:1237.4px;width:46.59999999999991px;text-align:right;top:332.09999999999997px;font-size:8.2px;color:#a8a8a8;letter-spacing:0.5px;">---</div>
<div class="t" style="left:1289px;width:27.299999999999955px;text-align:right;top:332.09999999999997px;font-size:8.2px;color:#3a3a3a;">90.00</div>
<div class="t" style="left:1321.3px;width:26.100000000000136px;text-align:right;top:332.09999999999997px;font-size:8.2px;color:#3a3a3a;">0.84</div>
<div class="t" style="left:796px;top:346.37px;font-size:8.2px;color:#3a3a3a">Sample #00013</div>
<div class="t" style="left:865.2px;top:346.37px;font-size:8.2px;color:#3a3a3a">SCI</div>
<div class="a" style="left:921.9px;top:342.57px;width:77.5px;height:14.27px;background:#dd3d00"></div>
<div class="t" style="left:927.4px;top:346.37px;font-size:8.2px;color:#fff">NG</div>
<div class="t" style="left:999.4px;width:31.100000000000023px;text-align:right;top:346.37px;font-size:8.2px;color:#3a3a3a;">67.06</div>
<div class="t" style="left:1035.5px;width:31.90000000000009px;text-align:right;top:346.37px;font-size:8.2px;color:#3a3a3a;">-1.64</div>
<div class="t" style="left:1072.4px;width:32.899999999999864px;text-align:right;top:346.37px;font-size:8.2px;color:#3a3a3a;">-22.64</div>
<div class="t" style="left:1110.3px;width:36.90000000000009px;text-align:right;top:346.37px;font-size:8.2px;color:#3a3a3a;">9.91</div>
<div class="t" style="left:1152.2px;width:37.200000000000045px;text-align:right;top:346.37px;font-size:8.2px;color:#3a3a3a;">26.56</div>
<div class="t" style="left:1194.4px;width:38.0px;text-align:right;top:346.37px;font-size:8.2px;color:#3a3a3a;">-37.20</div>
<div class="t" style="left:1237.4px;width:46.59999999999991px;text-align:right;top:346.37px;font-size:8.2px;color:#e4552e;">46.77</div>
<div class="t" style="left:1289px;width:27.299999999999955px;text-align:right;top:346.37px;font-size:8.2px;color:#3a3a3a;">90.00</div>
<div class="t" style="left:1321.3px;width:26.100000000000136px;text-align:right;top:346.37px;font-size:8.2px;color:#3a3a3a;">0.84</div>
<div class="t" style="left:796px;top:360.64000000000004px;font-size:8.2px;color:#3a3a3a">Sample #00013</div>
<div class="t" style="left:865.2px;top:360.64000000000004px;font-size:8.2px;color:#3a3a3a">---</div>
<div class="a" style="left:921.9px;top:356.84000000000003px;width:77.5px;height:14.27px;background:#dd3d00"></div>
<div class="t" style="left:927.4px;top:360.64000000000004px;font-size:8.2px;color:#fff">NG</div>
<div class="t" style="left:999.4px;width:31.100000000000023px;text-align:right;top:360.64000000000004px;font-size:8.2px;color:#a8a8a8;letter-spacing:0.5px;">---</div>
<div class="t" style="left:1035.5px;width:31.90000000000009px;text-align:right;top:360.64000000000004px;font-size:8.2px;color:#a8a8a8;letter-spacing:0.5px;">---</div>
<div class="t" style="left:1072.4px;width:32.899999999999864px;text-align:right;top:360.64000000000004px;font-size:8.2px;color:#a8a8a8;letter-spacing:0.5px;">---</div>
<div class="t" style="left:1110.3px;width:36.90000000000009px;text-align:right;top:360.64000000000004px;font-size:8.2px;color:#a8a8a8;letter-spacing:0.5px;">---</div>
<div class="t" style="left:1152.2px;width:37.200000000000045px;text-align:right;top:360.64000000000004px;font-size:8.2px;color:#a8a8a8;letter-spacing:0.5px;">---</div>
<div class="t" style="left:1194.4px;width:38.0px;text-align:right;top:360.64000000000004px;font-size:8.2px;color:#a8a8a8;letter-spacing:0.5px;">---</div>
<div class="t" style="left:1237.4px;width:46.59999999999991px;text-align:right;top:360.64000000000004px;font-size:8.2px;color:#a8a8a8;letter-spacing:0.5px;">---</div>
<div class="t" style="left:1289px;width:27.299999999999955px;text-align:right;top:360.64000000000004px;font-size:8.2px;color:#3a3a3a;">90.00</div>
<div class="t" style="left:1321.3px;width:26.100000000000136px;text-align:right;top:360.64000000000004px;font-size:8.2px;color:#3a3a3a;">0.84</div>
<div class="a" style="left:790px;top:127.92000000000002px;width:562.4000000000001px;height:1px;background:#e4e4e4"></div>
<div class="a" style="left:790px;top:142.19000000000003px;width:562.4000000000001px;height:1px;background:#e4e4e4"></div>
<div class="a" style="left:790px;top:156.46px;width:562.4000000000001px;height:1px;background:#e4e4e4"></div>
<div class="a" style="left:790px;top:170.73000000000002px;width:562.4000000000001px;height:1px;background:#e4e4e4"></div>
<div class="a" style="left:790px;top:185.0px;width:562.4000000000001px;height:1px;background:#e4e4e4"></div>
<div class="a" style="left:790px;top:199.27px;width:562.4000000000001px;height:1px;background:#e4e4e4"></div>
<div class="a" style="left:790px;top:213.54000000000002px;width:562.4000000000001px;height:1px;background:#e4e4e4"></div>
<div class="a" style="left:790px;top:227.81px;width:562.4000000000001px;height:1px;background:#e4e4e4"></div>
<div class="a" style="left:790px;top:242.08px;width:562.4000000000001px;height:1px;background:#e4e4e4"></div>
<div class="a" style="left:790px;top:256.34999999999997px;width:562.4000000000001px;height:1px;background:#e4e4e4"></div>
<div class="a" style="left:790px;top:270.61999999999995px;width:562.4000000000001px;height:1px;background:#e4e4e4"></div>
<div class="a" style="left:790px;top:284.89px;width:562.4000000000001px;height:1px;background:#e4e4e4"></div>
<div class="a" style="left:790px;top:299.15999999999997px;width:562.4000000000001px;height:1px;background:#e4e4e4"></div>
<div class="a" style="left:790px;top:313.42999999999995px;width:562.4000000000001px;height:1px;background:#e4e4e4"></div>
<div class="a" style="left:790px;top:327.69999999999993px;width:562.4000000000001px;height:1px;background:#e4e4e4"></div>
<div class="a" style="left:790px;top:341.9699999999999px;width:562.4000000000001px;height:1px;background:#e4e4e4"></div>
<div class="a" style="left:790px;top:356.23999999999995px;width:562.4000000000001px;height:1px;background:#e4e4e4"></div>
<div class="a" style="left:790px;top:370.51px;width:562.4000000000001px;height:1px;background:#e4e4e4"></div>
<div class="a" style="left:787px;top:114.25px;width:1px;height:256.86px;background:#dcdcdc"></div>
<div class="a" style="left:789.5px;top:114.25px;width:1px;height:256.86px;background:#e6e6e6"></div>
<div class="a" style="left:711.5px;top:142.29px;width:78px;height:1px;background:#e0e0e0"></div>
<div class="a" style="left:711.5px;top:128.02px;width:8.5px;height:1px;background:#e4e4e4"></div>
<svg class="a" style="left:723px;top:119.885px" width="6" height="6" viewBox="0 0 6 6"><path d="M0.5 1.5H5.5L3 4.8Z" fill="#111"/></svg>
<svg class="a" style="left:732px;top:117.885px" width="10.0" height="10.0" viewBox="0 0 10 10"><circle cx="5" cy="5" r="3.1" stroke="#e0559a" fill="none" stroke-width="1.3"/><circle cx="5" cy="5" r="1.1" fill="#e0559a"/><path d="M5 0.3L6 2L4 2ZM5 9.7L6 8L4 8ZM0.3 5L2 4V6ZM9.7 5L8 4V6Z" fill="#e0559a"/></svg>
<div class="t" style="left:745.5px;top:118.385px;font-size:8.3px;color:#3a3a3a">Target</div>
<div class="a" style="left:711.5px;top:170.82999999999998px;width:78px;height:1px;background:#e0e0e0"></div>
<div class="a" style="left:711.5px;top:156.56px;width:8.5px;height:1px;background:#e4e4e4"></div>
<svg class="a" style="left:723px;top:148.42499999999998px" width="6" height="6" viewBox="0 0 6 6"><path d="M0.5 1.5H5.5L3 4.8Z" fill="#111"/></svg>
<svg class="a" style="left:732.5px;top:146.42499999999998px" width="10.0" height="10.0" viewBox="0 0 10 10"><path d="M1.6 8.4L4.2 5.8" stroke="#1f6fd0" stroke-width="1.6" stroke-linecap="round"/><path d="M3.4 5.2L4.0 3.0L6.0 0.5L6.9 0.9L7.1 2.8L9.3 2.9L8.6 4.3L6.1 6.1L4.4 6.3Z" fill="#1f6fd0" stroke="#1f6fd0" stroke-width=".4" stroke-linejoin="round"/></svg>
<div class="t" style="left:745px;top:146.92499999999998px;font-size:8.3px;color:#3a3a3a">1</div>
<div class="a" style="left:711.5px;top:199.36999999999998px;width:78px;height:1px;background:#e0e0e0"></div>
<div class="a" style="left:711.5px;top:185.1px;width:8.5px;height:1px;background:#e4e4e4"></div>
<svg class="a" style="left:723px;top:176.96499999999997px" width="6" height="6" viewBox="0 0 6 6"><path d="M0.5 1.5H5.5L3 4.8Z" fill="#111"/></svg>
<svg class="a" style="left:732.5px;top:174.96499999999997px" width="10.0" height="10.0" viewBox="0 0 10 10"><path d="M1.6 8.4L4.2 5.8" stroke="#1f6fd0" stroke-width="1.6" stroke-linecap="round"/><path d="M3.4 5.2L4.0 3.0L6.0 0.5L6.9 0.9L7.1 2.8L9.3 2.9L8.6 4.3L6.1 6.1L4.4 6.3Z" fill="#1f6fd0" stroke="#1f6fd0" stroke-width=".4" stroke-linejoin="round"/></svg>
<div class="t" style="left:745px;top:175.46499999999997px;font-size:8.3px;color:#3a3a3a">2</div>
<div class="a" style="left:711.5px;top:227.91px;width:78px;height:1px;background:#e0e0e0"></div>
<div class="a" style="left:711.5px;top:213.64000000000001px;width:8.5px;height:1px;background:#e4e4e4"></div>
<svg class="a" style="left:723px;top:205.505px" width="6" height="6" viewBox="0 0 6 6"><path d="M0.5 1.5H5.5L3 4.8Z" fill="#111"/></svg>
<svg class="a" style="left:732.5px;top:203.505px" width="10.0" height="10.0" viewBox="0 0 10 10"><path d="M1.6 8.4L4.2 5.8" stroke="#1f6fd0" stroke-width="1.6" stroke-linecap="round"/><path d="M3.4 5.2L4.0 3.0L6.0 0.5L6.9 0.9L7.1 2.8L9.3 2.9L8.6 4.3L6.1 6.1L4.4 6.3Z" fill="#1f6fd0" stroke="#1f6fd0" stroke-width=".4" stroke-linejoin="round"/></svg>
<div class="t" style="left:745px;top:204.005px;font-size:8.3px;color:#3a3a3a">3</div>
<div class="a" style="left:711.5px;top:256.45px;width:78px;height:1px;background:#e0e0e0"></div>
<div class="a" style="left:711.5px;top:242.18px;width:8.5px;height:1px;background:#e4e4e4"></div>
<svg class="a" style="left:723px;top:234.045px" width="6" height="6" viewBox="0 0 6 6"><path d="M0.5 1.5H5.5L3 4.8Z" fill="#111"/></svg>
<svg class="a" style="left:732.5px;top:232.045px" width="10.0" height="10.0" viewBox="0 0 10 10"><path d="M1.6 8.4L4.2 5.8" stroke="#1f6fd0" stroke-width="1.6" stroke-linecap="round"/><path d="M3.4 5.2L4.0 3.0L6.0 0.5L6.9 0.9L7.1 2.8L9.3 2.9L8.6 4.3L6.1 6.1L4.4 6.3Z" fill="#1f6fd0" stroke="#1f6fd0" stroke-width=".4" stroke-linejoin="round"/></svg>
<div class="t" style="left:745px;top:232.545px;font-size:8.3px;color:#3a3a3a">4</div>
<div class="a" style="left:711.5px;top:284.99px;width:78px;height:1px;background:#e0e0e0"></div>
<div class="a" style="left:711.5px;top:270.71999999999997px;width:8.5px;height:1px;background:#e4e4e4"></div>
<svg class="a" style="left:723px;top:262.585px" width="6" height="6" viewBox="0 0 6 6"><path d="M0.5 1.5H5.5L3 4.8Z" fill="#111"/></svg>
<svg class="a" style="left:732.5px;top:260.585px" width="10.0" height="10.0" viewBox="0 0 10 10"><path d="M1.6 8.4L4.2 5.8" stroke="#1f6fd0" stroke-width="1.6" stroke-linecap="round"/><path d="M3.4 5.2L4.0 3.0L6.0 0.5L6.9 0.9L7.1 2.8L9.3 2.9L8.6 4.3L6.1 6.1L4.4 6.3Z" fill="#1f6fd0" stroke="#1f6fd0" stroke-width=".4" stroke-linejoin="round"/></svg>
<div class="t" style="left:745px;top:261.085px;font-size:8.3px;color:#3a3a3a">5</div>
<div class="a" style="left:711.5px;top:313.53000000000003px;width:78px;height:1px;background:#e0e0e0"></div>
<div class="a" style="left:711.5px;top:299.26px;width:8.5px;height:1px;background:#e4e4e4"></div>
<svg class="a" style="left:723px;top:291.125px" width="6" height="6" viewBox="0 0 6 6"><path d="M0.5 1.5H5.5L3 4.8Z" fill="#111"/></svg>
<svg class="a" style="left:732.5px;top:289.125px" width="10.0" height="10.0" viewBox="0 0 10 10"><path d="M1.6 8.4L4.2 5.8" stroke="#1f6fd0" stroke-width="1.6" stroke-linecap="round"/><path d="M3.4 5.2L4.0 3.0L6.0 0.5L6.9 0.9L7.1 2.8L9.3 2.9L8.6 4.3L6.1 6.1L4.4 6.3Z" fill="#1f6fd0" stroke="#1f6fd0" stroke-width=".4" stroke-linejoin="round"/></svg>
<div class="t" style="left:745px;top:289.625px;font-size:8.3px;color:#3a3a3a">6</div>
<div class="a" style="left:711.5px;top:342.07px;width:78px;height:1px;background:#e0e0e0"></div>
<div class="a" style="left:711.5px;top:327.79999999999995px;width:8.5px;height:1px;background:#e4e4e4"></div>
<svg class="a" style="left:723px;top:319.66499999999996px" width="6" height="6" viewBox="0 0 6 6"><path d="M0.5 1.5H5.5L3 4.8Z" fill="#111"/></svg>
<svg class="a" style="left:732.5px;top:317.66499999999996px" width="10.0" height="10.0" viewBox="0 0 10 10"><path d="M1.6 8.4L4.2 5.8" stroke="#1f6fd0" stroke-width="1.6" stroke-linecap="round"/><path d="M3.4 5.2L4.0 3.0L6.0 0.5L6.9 0.9L7.1 2.8L9.3 2.9L8.6 4.3L6.1 6.1L4.4 6.3Z" fill="#1f6fd0" stroke="#1f6fd0" stroke-width=".4" stroke-linejoin="round"/></svg>
<div class="t" style="left:745px;top:318.16499999999996px;font-size:8.3px;color:#3a3a3a">7</div>
<div class="a" style="left:711.5px;top:370.61px;width:78px;height:1px;background:#e0e0e0"></div>
<div class="a" style="left:711.5px;top:356.34px;width:8.5px;height:1px;background:#e4e4e4"></div>
<svg class="a" style="left:723px;top:348.205px" width="6" height="6" viewBox="0 0 6 6"><path d="M0.5 1.5H5.5L3 4.8Z" fill="#111"/></svg>
<svg class="a" style="left:732.5px;top:346.205px" width="10.0" height="10.0" viewBox="0 0 10 10"><path d="M1.6 8.4L4.2 5.8" stroke="#1f6fd0" stroke-width="1.6" stroke-linecap="round"/><path d="M3.4 5.2L4.0 3.0L6.0 0.5L6.9 0.9L7.1 2.8L9.3 2.9L8.6 4.3L6.1 6.1L4.4 6.3Z" fill="#1f6fd0" stroke="#1f6fd0" stroke-width=".4" stroke-linejoin="round"/></svg>
<div class="t" style="left:745px;top:346.705px;font-size:8.3px;color:#3a3a3a">8</div>
<div class="a" style="left:720px;top:114.25px;width:1px;height:256.86px;background:#e6e6e6"></div>
<div class="a" style="left:711.5px;top:142.29px;width:724px;height:1.2px;background:#d6d6d6"></div>
<div class="a" style="left:1430px;top:114.25px;width:5.5px;height:256.86px;background:#ebebeb"></div>
<svg class="a" style="left:1430.5px;top:117.5px" width="5" height="4" viewBox="0 0 5 4"><path d="M0.5 3.5H4.5L2.5 0.8Z" fill="#888"/></svg>
<svg class="a" style="left:1430.5px;top:136.5px" width="5" height="4" viewBox="0 0 5 4"><path d="M0.5 0.5H4.5L2.5 3.2Z" fill="#888"/></svg>
<svg class="a" style="left:1430.5px;top:146px" width="5" height="4" viewBox="0 0 5 4"><path d="M0.5 3.5H4.5L2.5 0.8Z" fill="#888"/></svg>
<svg class="a" style="left:1430.5px;top:363.5px" width="5" height="4" viewBox="0 0 5 4"><path d="M0.5 0.5H4.5L2.5 3.2Z" fill="#888"/></svg>
<div class="a" style="left:711.5px;top:371.11px;width:724px;height:1px;background:#d8d8d8"></div>
<div class="a" style="left:711px;top:377px;width:729px;height:406px;background:#fff;border-left:1px solid #a9a9a9"></div>
<div class="a" style="left:712px;top:377.5px;width:728px;height:16px;background:#f3f3f3;border-bottom:1px solid #d6d6d6;border-top:1px solid #a0a0a0"></div>
<div class="t" style="left:717px;top:382px;font-size:7.2px;color:#707070">Canvas Window</div>
<div class="a" style="left:719.4px;top:400.3px;width:721px;height:22.5px;background:#f3f3f3"></div>
<svg class="a" style="left:722.5px;top:407px" width="11" height="11" viewBox="0 0 11 11"><rect x="1" y="1.2" width="4" height="4" rx="1" fill="none" stroke="#222" stroke-width="1"/><rect x="1" y="5.5" width="4.5" height="4.5" rx="0.5" fill="none" stroke="#222" stroke-width="1"/><rect x="5" y="2.5" width="5" height="5" fill="#000"/></svg>
<div class="a" style="left:736.3px;top:403.5px;width:1px;height:17px;background:#d0d0d0"></div>
<svg class="a" style="left:741.5px;top:407.5px" width="9" height="9" viewBox="0 0 9 9"><path d="M1 0.5V8" stroke="#555" stroke-width=".8"/><path d="M2 3.2H8M2 5.2H8" stroke="#666" stroke-width=".8"/></svg>
<div class="a" style="left:754.3px;top:403.5px;width:1px;height:17px;background:#d0d0d0"></div>
<div class="a" style="left:719.9px;top:423.8px;width:21.7px;height:360px;background:#505050"></div>
<div class="a" style="left:719.9px;top:423.8px;width:21.7px;height:16px;background:#1e7896"></div>
<svg class="a" style="left:725.5px;top:427px" width="10" height="10" viewBox="0 0 10 10"><path d="M1 1L8.5 4L5.5 5.2L4.3 8.5Z" fill="none" stroke="#fff" stroke-width="1"/><path d="M5.5 5.2L8.5 8.5" stroke="#fff" stroke-width="1"/></svg>
<svg class="a" style="left:725px;top:444.5px" width="11" height="10" viewBox="0 0 11 10"><path d="M1 6L4 3L6 5L9.5 1" stroke="#fff" stroke-width=".9" fill="none"/><rect x="3" y="6.5" width="1.3" height="3" fill="#fff"/><rect x="5.3" y="5.5" width="1.3" height="4" fill="#fff"/><rect x="7.6" y="4" width="1.3" height="5.5" fill="#fff"/><rect x="9.6" y="3" width="1.3" height="6.5" fill="#fff"/></svg>
<svg class="a" style="left:725.5px;top:460px" width="10" height="10" viewBox="0 0 10 10"><rect x="0.8" y="0.8" width="7.5" height="6.5" fill="none" stroke="#fff" stroke-width="1"/><path d="M6 6L9.2 9.5" stroke="#fff" stroke-width="1"/></svg>
<svg class="a" style="left:725.5px;top:477px" width="10" height="10" viewBox="0 0 10 10"><path d="M1 0.8H5L7 2.8V8.8H1Z" fill="none" stroke="#fff" stroke-width="1"/><path d="M2.5 6.5L4 5L5 6" stroke="#fff" stroke-width=".8" fill="none"/><path d="M6.5 9.5H9.8M7.5 7V9.5M9 8V9.5" stroke="#fff" stroke-width=".9"/></svg>
<div class="a" style="left:741.6px;top:423.8px;width:698.4px;height:11.5px;background:#fdfdfd"></div>
<div class="a" style="left:741.6px;top:423.8px;width:12.4px;height:11.5px;background:#f0f0f0"></div>
<div class="a" style="left:741.6px;top:435.3px;width:12.4px;height:348px;background:#fafafa"></div>
<div class="a" style="left:754px;top:435.3px;width:686px;height:348px;background:#fcfcfc"></div>
<svg class="a" style="left:0;top:0" width="1440" height="783" viewBox="0 0 1440 783"><path d="M754 435.5H1440M753.5 435.5V783" stroke="#e6e6e6" stroke-width="1"/><path d="M754.5 432.30V435.3" stroke="#cccccc" stroke-width="1"/><path d="M757.5 433.30V435.3" stroke="#d4d4d4" stroke-width="1"/><path d="M760.5 432.30V435.3" stroke="#cccccc" stroke-width="1"/><path d="M763.5 433.30V435.3" stroke="#d4d4d4" stroke-width="1"/><path d="M767.5 426.80V435.3" stroke="#b4b4b4" stroke-width="1"/><path d="M770.5 433.30V435.3" stroke="#d4d4d4" stroke-width="1"/><path d="M773.5 432.30V435.3" stroke="#cccccc" stroke-width="1"/><path d="M776.5 433.30V435.3" stroke="#d4d4d4" stroke-width="1"/><path d="M780.5 432.30V435.3" stroke="#cccccc" stroke-width="1"/><path d="M783.5 433.30V435.3" stroke="#d4d4d4" stroke-width="1"/><path d="M786.5 432.30V435.3" stroke="#cccccc" stroke-width="1"/><path d="M789.5 433.30V435.3" stroke="#d4d4d4" stroke-width="1"/><path d="M793.5 432.30V435.3" stroke="#cccccc" stroke-width="1"/><path d="M796.5 433.30V435.3" stroke="#d4d4d4" stroke-width="1"/><path d="M799.5 426.80V435.3" stroke="#b4b4b4" stroke-width="1"/><path d="M803.5 433.30V435.3" stroke="#d4d4d4" stroke-width="1"/><path d="M806.5 432.30V435.3" stroke="#cccccc" stroke-width="1"/><path d="M809.5 433.30V435.3" stroke="#d4d4d4" stroke-width="1"/><path d="M812.5 432.30V435.3" stroke="#cccccc" stroke-width="1"/><path d="M816.5 433.30V435.3" stroke="#d4d4d4" stroke-width="1"/><path d="M819.5 432.30V435.3" stroke="#cccccc" stroke-width="1"/><path d="M822.5 433.30V435.3" stroke="#d4d4d4" stroke-width="1"/><path d="M825.5 432.30V435.3" stroke="#cccccc" stroke-width="1"/><path d="M829.5 433.30V435.3" stroke="#d4d4d4" stroke-width="1"/><path d="M832.5 426.80V435.3" stroke="#b4b4b4" stroke-width="1"/><path d="M835.5 433.30V435.3" stroke="#d4d4d4" stroke-width="1"/><path d="M838.5 432.30V435.3" stroke="#cccccc" stroke-width="1"/><path d="M842.5 433.30V435.3" stroke="#d4d4d4" stroke-width="1"/><path d="M845.5 432.30V435.3" stroke="#cccccc" stroke-width="1"/><path d="M848.5 433.30V435.3" stroke="#d4d4d4" stroke-width="1"/><path d="M851.5 432.30V435.3" stroke="#cccccc" stroke-width="1"/><path d="M855.5 433.30V435.3" stroke="#d4d4d4" stroke-width="1"/><path d="M858.5 432.30V435.3" stroke="#cccccc" stroke-width="1"/><path d="M861.5 433.30V435.3" stroke="#d4d4d4" stroke-width="1"/><path d="M864.5 426.80V435.3" stroke="#b4b4b4" stroke-width="1"/><path d="M868.5 433.30V435.3" stroke="#d4d4d4" stroke-width="1"/><path d="M871.5 432.30V435.3" stroke="#cccccc" stroke-width="1"/><path d="M874.5 433.30V435.3" stroke="#d4d4d4" stroke-width="1"/><path d="M877.5 432.30V435.3" stroke="#cccccc" stroke-width="1"/><path d="M881.5 433.30V435.3" stroke="#d4d4d4" stroke-width="1"/><path d="M884.5 432.30V435.3" stroke="#cccccc" stroke-width="1"/><path d="M887.5 433.30V435.3" stroke="#d4d4d4" stroke-width="1"/><path d="M890.5 432.30V435.3" stroke="#cccccc" stroke-width="1"/><path d="M894.5 433.30V435.3" stroke="#d4d4d4" stroke-width="1"/><path d="M897.5 426.80V435.3" stroke="#b4b4b4" stroke-width="1"/><path d="M900.5 433.30V435.3" stroke="#d4d4d4" stroke-width="1"/><path d="M903.5 432.30V435.3" stroke="#cccccc" stroke-width="1"/><path d="M907.5 433.30V435.3" stroke="#d4d4d4" stroke-width="1"/><path d="M910.5 432.30V435.3" stroke="#cccccc" stroke-width="1"/><path d="M913.5 433.30V435.3" stroke="#d4d4d4" stroke-width="1"/><path d="M916.5 432.30V435.3" stroke="#cccccc" stroke-width="1"/><path d="M920.5 433.30V435.3" stroke="#d4d4d4" stroke-width="1"/><path d="M923.5 432.30V435.3" stroke="#cccccc" stroke-width="1"/><path d="M926.5 433.30V435.3" stroke="#d4d4d4" stroke-width="1"/><path d="M929.5 426.80V435.3" stroke="#b4b4b4" stroke-width="1"/><path d="M933.5 433.30V435.3" stroke="#d4d4d4" stroke-width="1"/><path d="M936.5 432.30V435.3" stroke="#cccccc" stroke-width="1"/><path d="M939.5 433.30V435.3" stroke="#d4d4d4" stroke-width="1"/><path d="M942.5 432.30V435.3" stroke="#cccccc" stroke-width="1"/><path d="M946.5 433.30V435.3" stroke="#d4d4d4" stroke-width="1"/><path d="M949.5 432.30V435.3" stroke="#cccccc" stroke-width="1"/><path d="M952.5 433.30V435.3" stroke="#d4d4d4" stroke-width="1"/><path d="M955.5 432.30V435.3" stroke="#cccccc" stroke-width="1"/><path d="M959.5 433.30V435.3" stroke="#d4d4d4" stroke-width="1"/><path d="M962.5 426.80V435.3" stroke="#b4b4b4" stroke-width="1"/><path d="M965.5 433.30V435.3" stroke="#d4d4d4" stroke-width="1"/><path d="M969.5 432.30V435.3" stroke="#cccccc" stroke-width="1"/><path d="M972.5 433.30V435.3" stroke="#d4d4d4" stroke-width="1"/><path d="M975.5 432.30V435.3" stroke="#cccccc" stroke-width="1"/><path d="M978.5 433.30V435.3" stroke="#d4d4d4" stroke-width="1"/><path d="M982.5 432.30V435.3" stroke="#cccccc" stroke-width="1"/><path d="M985.5 433.30V435.3" stroke="#d4d4d4" stroke-width="1"/><path d="M988.5 432.30V435.3" stroke="#cccccc" stroke-width="1"/><path d="M991.5 433.30V435.3" stroke="#d4d4d4" stroke-width="1"/><path d="M995.5 426.80V435.3" stroke="#b4b4b4" stroke-width="1"/><path d="M998.5 433.30V435.3" stroke="#d4d4d4" stroke-width="1"/><path d="M1001.5 432.30V435.3" stroke="#cccccc" stroke-width="1"/><path d="M1004.5 433.30V435.3" stroke="#d4d4d4" stroke-width="1"/><path d="M1008.5 432.30V435.3" stroke="#cccccc" stroke-width="1"/><path d="M1011.5 433.30V435.3" stroke="#d4d4d4" stroke-width="1"/><path d="M1014.5 432.30V435.3" stroke="#cccccc" stroke-width="1"/><path d="M1017.5 433.30V435.3" stroke="#d4d4d4" stroke-width="1"/><path d="M1021.5 432.30V435.3" stroke="#cccccc" stroke-width="1"/><path d="M1024.5 433.30V435.3" stroke="#d4d4d4" stroke-width="1"/><path d="M1027.5 426.80V435.3" stroke="#b4b4b4" stroke-width="1"/><path d="M1030.5 433.30V435.3" stroke="#d4d4d4" stroke-width="1"/><path d="M1034.5 432.30V435.3" stroke="#cccccc" stroke-width="1"/><path d="M1037.5 433.30V435.3" stroke="#d4d4d4" stroke-width="1"/><path d="M1040.5 432.30V435.3" stroke="#cccccc" stroke-width="1"/><path d="M1043.5 433.30V435.3" stroke="#d4d4d4" stroke-width="1"/><path d="M1047.5 432.30V435.3" stroke="#cccccc" stroke-width="1"/><path d="M1050.5 433.30V435.3" stroke="#d4d4d4" stroke-width="1"/><path d="M1053.5 432.30V435.3" stroke="#cccccc" stroke-width="1"/><path d="M1056.5 433.30V435.3" stroke="#d4d4d4" stroke-width="1"/><path d="M1060.5 426.80V435.3" stroke="#b4b4b4" stroke-width="1"/><path d="M1063.5 433.30V435.3" stroke="#d4d4d4" stroke-width="1"/><path d="M1066.5 432.30V435.3" stroke="#cccccc" stroke-width="1"/><path d="M1069.5 433.30V435.3" stroke="#d4d4d4" stroke-width="1"/><path d="M1073.5 432.30V435.3" stroke="#cccccc" stroke-width="1"/><path d="M1076.5 433.30V435.3" stroke="#d4d4d4" stroke-width="1"/><path d="M1079.5 432.30V435.3" stroke="#cccccc" stroke-width="1"/><path d="M1082.5 433.30V435.3" stroke="#d4d4d4" stroke-width="1"/><path d="M1086.5 432.30V435.3" stroke="#cccccc" stroke-width="1"/><path d="M1089.5 433.30V435.3" stroke="#d4d4d4" stroke-width="1"/><path d="M1092.5 426.80V435.3" stroke="#b4b4b4" stroke-width="1"/><path d="M1095.5 433.30V435.3" stroke="#d4d4d4" stroke-width="1"/><path d="M1099.5 432.30V435.3" stroke="#cccccc" stroke-width="1"/><path d="M1102.5 433.30V435.3" stroke="#d4d4d4" stroke-width="1"/><path d="M1105.5 432.30V435.3" stroke="#cccccc" stroke-width="1"/><path d="M1108.5 433.30V435.3" stroke="#d4d4d4" stroke-width="1"/><path d="M1112.5 432.30V435.3" stroke="#cccccc" stroke-width="1"/><path d="M1115.5 433.30V435.3" stroke="#d4d4d4" stroke-width="1"/><path d="M1118.5 432.30V435.3" stroke="#cccccc" stroke-width="1"/><path d="M1121.5 433.30V435.3" stroke="#d4d4d4" stroke-width="1"/><path d="M1125.5 426.80V435.3" stroke="#b4b4b4" stroke-width="1"/><path d="M1128.5 433.30V435.3" stroke="#d4d4d4" stroke-width="1"/><path d="M1131.5 432.30V435.3" stroke="#cccccc" stroke-width="1"/><path d="M1135.5 433.30V435.3" stroke="#d4d4d4" stroke-width="1"/><path d="M1138.5 432.30V435.3" stroke="#cccccc" stroke-width="1"/><path d="M1141.5 433.30V435.3" stroke="#d4d4d4" stroke-width="1"/><path d="M1144.5 432.30V435.3" stroke="#cccccc" stroke-width="1"/><path d="M1148.5 433.30V435.3" stroke="#d4d4d4" stroke-width="1"/><path d="M1151.5 432.30V435.3" stroke="#cccccc" stroke-width="1"/><path d="M1154.5 433.30V435.3" stroke="#d4d4d4" stroke-width="1"/><path d="M1157.5 426.80V435.3" stroke="#b4b4b4" stroke-width="1"/><path d="M1161.5 433.30V435.3" stroke="#d4d4d4" stroke-width="1"/><path d="M1164.5 432.30V435.3" stroke="#cccccc" stroke-width="1"/><path d="M1167.5 433.30V435.3" stroke="#d4d4d4" stroke-width="1"/><path d="M1170.5 432.30V435.3" stroke="#cccccc" stroke-width="1"/><path d="M1174.5 433.30V435.3" stroke="#d4d4d4" stroke-width="1"/><path d="M1177.5 432.30V435.3" stroke="#cccccc" stroke-width="1"/><path d="M1180.5 433.30V435.3" stroke="#d4d4d4" stroke-width="1"/><path d="M1183.5 432.30V435.3" stroke="#cccccc" stroke-width="1"/><path d="M1187.5 433.30V435.3" stroke="#d4d4d4" stroke-width="1"/><path d="M1190.5 426.80V435.3" stroke="#b4b4b4" stroke-width="1"/><path d="M1193.5 433.30V435.3" stroke="#d4d4d4" stroke-width="1"/><path d="M1196.5 432.30V435.3" stroke="#cccccc" stroke-width="1"/><path d="M1200.5 433.30V435.3" stroke="#d4d4d4" stroke-width="1"/><path d="M1203.5 432.30V435.3" stroke="#cccccc" stroke-width="1"/><path d="M1206.5 433.30V435.3" stroke="#d4d4d4" stroke-width="1"/><path d="M1209.5 432.30V435.3" stroke="#cccccc" stroke-width="1"/><path d="M1213.5 433.30V435.3" stroke="#d4d4d4" stroke-width="1"/><path d="M1216.5 432.30V435.3" stroke="#cccccc" stroke-width="1"/><path d="M1219.5 433.30V435.3" stroke="#d4d4d4" stroke-width="1"/><path d="M1222.5 426.80V435.3" stroke="#b4b4b4" stroke-width="1"/><path d="M1226.5 433.30V435.3" stroke="#d4d4d4" stroke-width="1"/><path d="M1229.5 432.30V435.3" stroke="#cccccc" stroke-width="1"/><path d="M1232.5 433.30V435.3" stroke="#d4d4d4" stroke-width="1"/><path d="M1235.5 432.30V435.3" stroke="#cccccc" stroke-width="1"/><path d="M1239.5 433.30V435.3" stroke="#d4d4d4" stroke-width="1"/><path d="M1242.5 432.30V435.3" stroke="#cccccc" stroke-width="1"/><path d="M1245.5 433.30V435.3" stroke="#d4d4d4" stroke-width="1"/><path d="M1248.5 432.30V435.3" stroke="#cccccc" stroke-width="1"/><path d="M1252.5 433.30V435.3" stroke="#d4d4d4" stroke-width="1"/><path d="M1255.5 426.80V435.3" stroke="#b4b4b4" stroke-width="1"/><path d="M1258.5 433.30V435.3" stroke="#d4d4d4" stroke-width="1"/><path d="M1261.5 432.30V435.3" stroke="#cccccc" stroke-width="1"/><path d="M1265.5 433.30V435.3" stroke="#d4d4d4" stroke-width="1"/><path d="M1268.5 432.30V435.3" stroke="#cccccc" stroke-width="1"/><path d="M1271.5 433.30V435.3" stroke="#d4d4d4" stroke-width="1"/><path d="M1274.5 432.30V435.3" stroke="#cccccc" stroke-width="1"/><path d="M1278.5 433.30V435.3" stroke="#d4d4d4" stroke-width="1"/><path d="M1281.5 432.30V435.3" stroke="#cccccc" stroke-width="1"/><path d="M1284.5 433.30V435.3" stroke="#d4d4d4" stroke-width="1"/><path d="M1288.5 426.80V435.3" stroke="#b4b4b4" stroke-width="1"/><path d="M1291.5 433.30V435.3" stroke="#d4d4d4" stroke-width="1"/><path d="M1294.5 432.30V435.3" stroke="#cccccc" stroke-width="1"/><path d="M1297.5 433.30V435.3" stroke="#d4d4d4" stroke-width="1"/><path d="M1301.5 432.30V435.3" stroke="#cccccc" stroke-width="1"/><path d="M1304.5 433.30V435.3" stroke="#d4d4d4" stroke-width="1"/><path d="M1307.5 432.30V435.3" stroke="#cccccc" stroke-width="1"/><path d="M1310.5 433.30V435.3" stroke="#d4d4d4" stroke-width="1"/><path d="M1314.5 432.30V435.3" stroke="#cccccc" stroke-width="1"/><path d="M1317.5 433.30V435.3" stroke="#d4d4d4" stroke-width="1"/><path d="M1320.5 426.80V435.3" stroke="#b4b4b4" stroke-width="1"/><path d="M1323.5 433.30V435.3" stroke="#d4d4d4" stroke-width="1"/><path d="M1327.5 432.30V435.3" stroke="#cccccc" stroke-width="1"/><path d="M1330.5 433.30V435.3" stroke="#d4d4d4" stroke-width="1"/><path d="M1333.5 432.30V435.3" stroke="#cccccc" stroke-width="1"/><path d="M1336.5 433.30V435.3" stroke="#d4d4d4" stroke-width="1"/><path d="M1340.5 432.30V435.3" stroke="#cccccc" stroke-width="1"/><path d="M1343.5 433.30V435.3" stroke="#d4d4d4" stroke-width="1"/><path d="M1346.5 432.30V435.3" stroke="#cccccc" stroke-width="1"/><path d="M1349.5 433.30V435.3" stroke="#d4d4d4" stroke-width="1"/><path d="M1353.5 426.80V435.3" stroke="#b4b4b4" stroke-width="1"/><path d="M1356.5 433.30V435.3" stroke="#d4d4d4" stroke-width="1"/><path d="M1359.5 432.30V435.3" stroke="#cccccc" stroke-width="1"/><path d="M1362.5 433.30V435.3" stroke="#d4d4d4" stroke-width="1"/><path d="M1366.5 432.30V435.3" stroke="#cccccc" stroke-width="1"/><path d="M1369.5 433.30V435.3" stroke="#d4d4d4" stroke-width="1"/><path d="M1372.5 432.30V435.3" stroke="#cccccc" stroke-width="1"/><path d="M1375.5 433.30V435.3" stroke="#d4d4d4" stroke-width="1"/><path d="M1379.5 432.30V435.3" stroke="#cccccc" stroke-width="1"/><path d="M1382.5 433.30V435.3" stroke="#d4d4d4" stroke-width="1"/><path d="M1385.5 426.80V435.3" stroke="#b4b4b4" stroke-width="1"/><path d="M1388.5 433.30V435.3" stroke="#d4d4d4" stroke-width="1"/><path d="M1392.5 432.30V435.3" stroke="#cccccc" stroke-width="1"/><path d="M1395.5 433.30V435.3" stroke="#d4d4d4" stroke-width="1"/><path d="M1398.5 432.30V435.3" stroke="#cccccc" stroke-width="1"/><path d="M1401.5 433.30V435.3" stroke="#d4d4d4" stroke-width="1"/><path d="M1405.5 432.30V435.3" stroke="#cccccc" stroke-width="1"/><path d="M1408.5 433.30V435.3" stroke="#d4d4d4" stroke-width="1"/><path d="M1411.5 432.30V435.3" stroke="#cccccc" stroke-width="1"/><path d="M1414.5 433.30V435.3" stroke="#d4d4d4" stroke-width="1"/><path d="M1418.5 426.80V435.3" stroke="#b4b4b4" stroke-width="1"/><path d="M1421.5 433.30V435.3" stroke="#d4d4d4" stroke-width="1"/><path d="M1424.5 432.30V435.3" stroke="#cccccc" stroke-width="1"/><path d="M1427.5 433.30V435.3" stroke="#d4d4d4" stroke-width="1"/><path d="M1431.5 432.30V435.3" stroke="#cccccc" stroke-width="1"/><path d="M1434.5 433.30V435.3" stroke="#d4d4d4" stroke-width="1"/><path d="M1437.5 432.30V435.3" stroke="#cccccc" stroke-width="1"/><path d="M751.00 437.5H754" stroke="#cccccc" stroke-width="1"/><path d="M752.00 440.5H754" stroke="#d4d4d4" stroke-width="1"/><path d="M751.00 443.5H754" stroke="#cccccc" stroke-width="1"/><path d="M752.00 447.5H754" stroke="#d4d4d4" stroke-width="1"/><path d="M751.00 450.5H754" stroke="#cccccc" stroke-width="1"/><path d="M752.00 453.5H754" stroke="#d4d4d4" stroke-width="1"/><path d="M751.00 456.5H754" stroke="#cccccc" stroke-width="1"/><path d="M752.00 460.5H754" stroke="#d4d4d4" stroke-width="1"/><path d="M745.50 463.5H754" stroke="#b4b4b4" stroke-width="1"/><path d="M752.00 466.5H754" stroke="#d4d4d4" stroke-width="1"/><path d="M751.00 469.5H754" stroke="#cccccc" stroke-width="1"/><path d="M752.00 473.5H754" stroke="#d4d4d4" stroke-width="1"/><path d="M751.00 476.5H754" stroke="#cccccc" stroke-width="1"/><path d="M752.00 479.5H754" stroke="#d4d4d4" stroke-width="1"/><path d="M751.00 482.5H754" stroke="#cccccc" stroke-width="1"/><path d="M752.00 486.5H754" stroke="#d4d4d4" stroke-width="1"/><path d="M751.00 489.5H754" stroke="#cccccc" stroke-width="1"/><path d="M752.00 492.5H754" stroke="#d4d4d4" stroke-width="1"/><path d="M745.50 496.5H754" stroke="#b4b4b4" stroke-width="1"/><path d="M752.00 499.5H754" stroke="#d4d4d4" stroke-width="1"/><path d="M751.00 502.5H754" stroke="#cccccc" stroke-width="1"/><path d="M752.00 505.5H754" stroke="#d4d4d4" stroke-width="1"/><path d="M751.00 509.5H754" stroke="#cccccc" stroke-width="1"/><path d="M752.00 512.5H754" stroke="#d4d4d4" stroke-width="1"/><path d="M751.00 515.5H754" stroke="#cccccc" stroke-width="1"/><path d="M752.00 518.5H754" stroke="#d4d4d4" stroke-width="1"/><path d="M751.00 522.5H754" stroke="#cccccc" stroke-width="1"/><path d="M752.00 525.5H754" stroke="#d4d4d4" stroke-width="1"/><path d="M745.50 528.5H754" stroke="#b4b4b4" stroke-width="1"/><path d="M752.00 531.5H754" stroke="#d4d4d4" stroke-width="1"/><path d="M751.00 535.5H754" stroke="#cccccc" stroke-width="1"/><path d="M752.00 538.5H754" stroke="#d4d4d4" stroke-width="1"/><path d="M751.00 541.5H754" stroke="#cccccc" stroke-width="1"/><path d="M752.00 544.5H754" stroke="#d4d4d4" stroke-width="1"/><path d="M751.00 548.5H754" stroke="#cccccc" stroke-width="1"/><path d="M752.00 551.5H754" stroke="#d4d4d4" stroke-width="1"/><path d="M751.00 554.5H754" stroke="#cccccc" stroke-width="1"/><path d="M752.00 557.5H754" stroke="#d4d4d4" stroke-width="1"/><path d="M745.50 561.5H754" stroke="#b4b4b4" stroke-width="1"/><path d="M752.00 564.5H754" stroke="#d4d4d4" stroke-width="1"/><path d="M751.00 567.5H754" stroke="#cccccc" stroke-width="1"/><path d="M752.00 570.5H754" stroke="#d4d4d4" stroke-width="1"/><path d="M751.00 574.5H754" stroke="#cccccc" stroke-width="1"/><path d="M752.00 577.5H754" stroke="#d4d4d4" stroke-width="1"/><path d="M751.00 580.5H754" stroke="#cccccc" stroke-width="1"/><path d="M752.00 583.5H754" stroke="#d4d4d4" stroke-width="1"/><path d="M751.00 587.5H754" stroke="#cccccc" stroke-width="1"/><path d="M752.00 590.5H754" stroke="#d4d4d4" stroke-width="1"/><path d="M745.50 593.5H754" stroke="#b4b4b4" stroke-width="1"/><path d="M752.00 596.5H754" stroke="#d4d4d4" stroke-width="1"/><path d="M751.00 600.5H754" stroke="#cccccc" stroke-width="1"/><path d="M752.00 603.5H754" stroke="#d4d4d4" stroke-width="1"/><path d="M751.00 606.5H754" stroke="#cccccc" stroke-width="1"/><path d="M752.00 609.5H754" stroke="#d4d4d4" stroke-width="1"/><path d="M751.00 613.5H754" stroke="#cccccc" stroke-width="1"/><path d="M752.00 616.5H754" stroke="#d4d4d4" stroke-width="1"/><path d="M751.00 619.5H754" stroke="#cccccc" stroke-width="1"/><path d="M752.00 622.5H754" stroke="#d4d4d4" stroke-width="1"/><path d="M745.50 626.5H754" stroke="#b4b4b4" stroke-width="1"/><path d="M752.00 629.5H754" stroke="#d4d4d4" stroke-width="1"/><path d="M751.00 632.5H754" stroke="#cccccc" stroke-width="1"/><path d="M752.00 635.5H754" stroke="#d4d4d4" stroke-width="1"/><path d="M751.00 639.5H754" stroke="#cccccc" stroke-width="1"/><path d="M752.00 642.5H754" stroke="#d4d4d4" stroke-width="1"/><path d="M751.00 645.5H754" stroke="#cccccc" stroke-width="1"/><path d="M752.00 648.5H754" stroke="#d4d4d4" stroke-width="1"/><path d="M751.00 652.5H754" stroke="#cccccc" stroke-width="1"/><path d="M752.00 655.5H754" stroke="#d4d4d4" stroke-width="1"/><path d="M745.50 658.5H754" stroke="#b4b4b4" stroke-width="1"/><path d="M752.00 662.5H754" stroke="#d4d4d4" stroke-width="1"/><path d="M751.00 665.5H754" stroke="#cccccc" stroke-width="1"/><path d="M752.00 668.5H754" stroke="#d4d4d4" stroke-width="1"/><path d="M751.00 671.5H754" stroke="#cccccc" stroke-width="1"/><path d="M752.00 675.5H754" stroke="#d4d4d4" stroke-width="1"/><path d="M751.00 678.5H754" stroke="#cccccc" stroke-width="1"/><path d="M752.00 681.5H754" stroke="#d4d4d4" stroke-width="1"/><path d="M751.00 684.5H754" stroke="#cccccc" stroke-width="1"/><path d="M752.00 688.5H754" stroke="#d4d4d4" stroke-width="1"/><path d="M745.50 691.5H754" stroke="#b4b4b4" stroke-width="1"/><path d="M752.00 694.5H754" stroke="#d4d4d4" stroke-width="1"/><path d="M751.00 697.5H754" stroke="#cccccc" stroke-width="1"/><path d="M752.00 701.5H754" stroke="#d4d4d4" stroke-width="1"/><path d="M751.00 704.5H754" stroke="#cccccc" stroke-width="1"/><path d="M752.00 707.5H754" stroke="#d4d4d4" stroke-width="1"/><path d="M751.00 710.5H754" stroke="#cccccc" stroke-width="1"/><path d="M752.00 714.5H754" stroke="#d4d4d4" stroke-width="1"/><path d="M751.00 717.5H754" stroke="#cccccc" stroke-width="1"/><path d="M752.00 720.5H754" stroke="#d4d4d4" stroke-width="1"/><path d="M745.50 723.5H754" stroke="#b4b4b4" stroke-width="1"/><path d="M752.00 727.5H754" stroke="#d4d4d4" stroke-width="1"/><path d="M751.00 730.5H754" stroke="#cccccc" stroke-width="1"/><path d="M752.00 733.5H754" stroke="#d4d4d4" stroke-width="1"/><path d="M751.00 736.5H754" stroke="#cccccc" stroke-width="1"/><path d="M752.00 740.5H754" stroke="#d4d4d4" stroke-width="1"/><path d="M751.00 743.5H754" stroke="#cccccc" stroke-width="1"/><path d="M752.00 746.5H754" stroke="#d4d4d4" stroke-width="1"/><path d="M751.00 749.5H754" stroke="#cccccc" stroke-width="1"/><path d="M752.00 753.5H754" stroke="#d4d4d4" stroke-width="1"/><path d="M745.50 756.5H754" stroke="#b4b4b4" stroke-width="1"/><path d="M752.00 759.5H754" stroke="#d4d4d4" stroke-width="1"/><path d="M751.00 762.5H754" stroke="#cccccc" stroke-width="1"/><path d="M752.00 766.5H754" stroke="#d4d4d4" stroke-width="1"/><path d="M751.00 769.5H754" stroke="#cccccc" stroke-width="1"/><path d="M752.00 772.5H754" stroke="#d4d4d4" stroke-width="1"/><path d="M751.00 775.5H754" stroke="#cccccc" stroke-width="1"/><path d="M752.00 779.5H754" stroke="#d4d4d4" stroke-width="1"/><path d="M751.00 782.5H754" stroke="#cccccc" stroke-width="1"/></svg>
<div class="t" style="left:768.0px;top:425.6px;font-size:5.5px;color:#8a8a8a">0</div>
<div class="t" style="left:800.55px;top:425.6px;font-size:5.5px;color:#8a8a8a">50</div>
<div class="t" style="left:833.1px;top:425.6px;font-size:5.5px;color:#8a8a8a">100</div>
<div class="t" style="left:865.65px;top:425.6px;font-size:5.5px;color:#8a8a8a">150</div>
<div class="t" style="left:898.2px;top:425.6px;font-size:5.5px;color:#8a8a8a">200</div>
<div class="t" style="left:930.75px;top:425.6px;font-size:5.5px;color:#8a8a8a">250</div>
<div class="t" style="left:963.3px;top:425.6px;font-size:5.5px;color:#8a8a8a">300</div>
<div class="t" style="left:995.85px;top:425.6px;font-size:5.5px;color:#8a8a8a">350</div>
<div class="t" style="left:1028.4px;top:425.6px;font-size:5.5px;color:#8a8a8a">400</div>
<div class="t" style="left:1060.95px;top:425.6px;font-size:5.5px;color:#8a8a8a">450</div>
<div class="t" style="left:1093.5px;top:425.6px;font-size:5.5px;color:#8a8a8a">500</div>
<div class="t" style="left:1126.05px;top:425.6px;font-size:5.5px;color:#8a8a8a">550</div>
<div class="t" style="left:1158.6000000000001px;top:425.6px;font-size:5.5px;color:#8a8a8a">600</div>
<div class="t" style="left:1191.15px;top:425.6px;font-size:5.5px;color:#8a8a8a">650</div>
<div class="t" style="left:1223.7px;top:425.6px;font-size:5.5px;color:#8a8a8a">700</div>
<div class="t" style="left:1256.25px;top:425.6px;font-size:5.5px;color:#8a8a8a">750</div>
<div class="t" style="left:1288.8px;top:425.6px;font-size:5.5px;color:#8a8a8a">800</div>
<div class="t" style="left:1321.3500000000001px;top:425.6px;font-size:5.5px;color:#8a8a8a">850</div>
<div class="t" style="left:1353.8999999999999px;top:425.6px;font-size:5.5px;color:#8a8a8a">900</div>
<div class="t" style="left:1386.45px;top:425.6px;font-size:5.5px;color:#8a8a8a">950</div>
<div class="t" style="left:1419.0px;top:425.6px;font-size:5.5px;color:#8a8a8a">1000</div>
<div class="t" style="left:744px;top:464.45000000000005px;font-size:5.5px;color:#8a8a8a;transform-origin:0 0;transform:translate(0,0) rotate(-90deg) translate(-100%,0)"><span style="display:inline-block">-250</span></div>
<div class="t" style="left:744px;top:497.0px;font-size:5.5px;color:#8a8a8a;transform-origin:0 0;transform:translate(0,0) rotate(-90deg) translate(-100%,0)"><span style="display:inline-block">-200</span></div>
<div class="t" style="left:744px;top:529.5500000000001px;font-size:5.5px;color:#8a8a8a;transform-origin:0 0;transform:translate(0,0) rotate(-90deg) translate(-100%,0)"><span style="display:inline-block">-150</span></div>
<div class="t" style="left:744px;top:562.1px;font-size:5.5px;color:#8a8a8a;transform-origin:0 0;transform:translate(0,0) rotate(-90deg) translate(-100%,0)"><span style="display:inline-block">-100</span></div>
<div class="t" style="left:744px;top:594.6500000000001px;font-size:5.5px;color:#8a8a8a;transform-origin:0 0;transform:translate(0,0) rotate(-90deg) translate(-100%,0)"><span style="display:inline-block">-50</span></div>
<div class="t" style="left:744px;top:627.2px;font-size:5.5px;color:#8a8a8a;transform-origin:0 0;transform:translate(0,0) rotate(-90deg) translate(-100%,0)"><span style="display:inline-block">0</span></div>
<div class="t" style="left:744px;top:659.75px;font-size:5.5px;color:#8a8a8a;transform-origin:0 0;transform:translate(0,0) rotate(-90deg) translate(-100%,0)"><span style="display:inline-block">50</span></div>
<div class="t" style="left:744px;top:692.3000000000001px;font-size:5.5px;color:#8a8a8a;transform-origin:0 0;transform:translate(0,0) rotate(-90deg) translate(-100%,0)"><span style="display:inline-block">100</span></div>
<div class="t" style="left:744px;top:724.85px;font-size:5.5px;color:#8a8a8a;transform-origin:0 0;transform:translate(0,0) rotate(-90deg) translate(-100%,0)"><span style="display:inline-block">150</span></div>
<div class="t" style="left:744px;top:757.4000000000001px;font-size:5.5px;color:#8a8a8a;transform-origin:0 0;transform:translate(0,0) rotate(-90deg) translate(-100%,0)"><span style="display:inline-block">200</span></div>
<div class="a" style="left:759px;top:473.8px;width:690px;height:320px;background:#fff;border:1px solid #e2e2e2"></div>
<svg class="a" style="left:771.5px;top:486.7px" width="670" height="300" viewBox="0 0 670 300"><path d="M-0.40 0V300" stroke="#f1f1f1" stroke-width="0.7"/><path d="M6.11 0V300" stroke="#f1f1f1" stroke-width="0.7"/><path d="M12.62 0V300" stroke="#f1f1f1" stroke-width="0.7"/><path d="M19.13 0V300" stroke="#f1f1f1" stroke-width="0.7"/><path d="M25.64 0V300" stroke="#f1f1f1" stroke-width="0.7"/><path d="M32.15 0V300" stroke="#f1f1f1" stroke-width="0.7"/><path d="M38.66 0V300" stroke="#f1f1f1" stroke-width="0.7"/><path d="M45.17 0V300" stroke="#f1f1f1" stroke-width="0.7"/><path d="M51.68 0V300" stroke="#f1f1f1" stroke-width="0.7"/><path d="M58.19 0V300" stroke="#f1f1f1" stroke-width="0.7"/><path d="M64.70 0V300" stroke="#f1f1f1" stroke-width="0.7"/><path d="M71.21 0V300" stroke="#f1f1f1" stroke-width="0.7"/><path d="M77.72 0V300" stroke="#f1f1f1" stroke-width="0.7"/><path d="M84.23 0V300" stroke="#f1f1f1" stroke-width="0.7"/><path d="M90.74 0V300" stroke="#f1f1f1" stroke-width="0.7"/><path d="M97.25 0V300" stroke="#f1f1f1" stroke-width="0.7"/><path d="M103.76 0V300" stroke="#f1f1f1" stroke-width="0.7"/><path d="M110.27 0V300" stroke="#f1f1f1" stroke-width="0.7"/><path d="M116.78 0V300" stroke="#f1f1f1" stroke-width="0.7"/><path d="M123.29 0V300" stroke="#f1f1f1" stroke-width="0.7"/><path d="M129.80 0V300" stroke="#f1f1f1" stroke-width="0.7"/><path d="M136.31 0V300" stroke="#f1f1f1" stroke-width="0.7"/><path d="M142.82 0V300" stroke="#f1f1f1" stroke-width="0.7"/><path d="M149.33 0V300" stroke="#f1f1f1" stroke-width="0.7"/><path d="M155.84 0V300" stroke="#f1f1f1" stroke-width="0.7"/><path d="M162.35 0V300" stroke="#f1f1f1" stroke-width="0.7"/><path d="M168.86 0V300" stroke="#f1f1f1" stroke-width="0.7"/><path d="M175.37 0V300" stroke="#f1f1f1" stroke-width="0.7"/><path d="M181.88 0V300" stroke="#f1f1f1" stroke-width="0.7"/><path d="M188.39 0V300" stroke="#f1f1f1" stroke-width="0.7"/><path d="M194.90 0V300" stroke="#f1f1f1" stroke-width="0.7"/><path d="M201.41 0V300" stroke="#f1f1f1" stroke-width="0.7"/><path d="M207.92 0V300" stroke="#f1f1f1" stroke-width="0.7"/><path d="M214.43 0V300" stroke="#f1f1f1" stroke-width="0.7"/><path d="M220.94 0V300" stroke="#f1f1f1" stroke-width="0.7"/><path d="M227.45 0V300" stroke="#f1f1f1" stroke-width="0.7"/><path d="M233.96 0V300" stroke="#f1f1f1" stroke-width="0.7"/><path d="M240.47 0V300" stroke="#f1f1f1" stroke-width="0.7"/><path d="M246.98 0V300" stroke="#f1f1f1" stroke-width="0.7"/><path d="M253.49 0V300" stroke="#f1f1f1" stroke-width="0.7"/><path d="M260.00 0V300" stroke="#f1f1f1" stroke-width="0.7"/><path d="M266.51 0V300" stroke="#f1f1f1" stroke-width="0.7"/><path d="M273.02 0V300" stroke="#f1f1f1" stroke-width="0.7"/><path d="M279.53 0V300" stroke="#f1f1f1" stroke-width="0.7"/><path d="M286.04 0V300" stroke="#f1f1f1" stroke-width="0.7"/><path d="M292.55 0V300" stroke="#f1f1f1" stroke-width="0.7"/><path d="M299.06 0V300" stroke="#f1f1f1" stroke-width="0.7"/><path d="M305.57 0V300" stroke="#f1f1f1" stroke-width="0.7"/><path d="M312.08 0V300" stroke="#f1f1f1" stroke-width="0.7"/><path d="M318.59 0V300" stroke="#f1f1f1" stroke-width="0.7"/><path d="M325.10 0V300" stroke="#f1f1f1" stroke-width="0.7"/><path d="M331.61 0V300" stroke="#f1f1f1" stroke-width="0.7"/><path d="M338.12 0V300" stroke="#f1f1f1" stroke-width="0.7"/><path d="M344.63 0V300" stroke="#f1f1f1" stroke-width="0.7"/><path d="M351.14 0V300" stroke="#f1f1f1" stroke-width="0.7"/><path d="M357.65 0V300" stroke="#f1f1f1" stroke-width="0.7"/><path d="M364.16 0V300" stroke="#f1f1f1" stroke-width="0.7"/><path d="M370.67 0V300" stroke="#f1f1f1" stroke-width="0.7"/><path d="M377.18 0V300" stroke="#f1f1f1" stroke-width="0.7"/><path d="M383.69 0V300" stroke="#f1f1f1" stroke-width="0.7"/><path d="M390.20 0V300" stroke="#f1f1f1" stroke-width="0.7"/><path d="M396.71 0V300" stroke="#f1f1f1" stroke-width="0.7"/><path d="M403.22 0V300" stroke="#f1f1f1" stroke-width="0.7"/><path d="M409.73 0V300" stroke="#f1f1f1" stroke-width="0.7"/><path d="M416.24 0V300" stroke="#f1f1f1" stroke-width="0.7"/><path d="M422.75 0V300" stroke="#f1f1f1" stroke-width="0.7"/><path d="M429.26 0V300" stroke="#f1f1f1" stroke-width="0.7"/><path d="M435.77 0V300" stroke="#f1f1f1" stroke-width="0.7"/><path d="M442.28 0V300" stroke="#f1f1f1" stroke-width="0.7"/><path d="M448.79 0V300" stroke="#f1f1f1" stroke-width="0.7"/><path d="M455.30 0V300" stroke="#f1f1f1" stroke-width="0.7"/><path d="M461.81 0V300" stroke="#f1f1f1" stroke-width="0.7"/><path d="M468.32 0V300" stroke="#f1f1f1" stroke-width="0.7"/><path d="M474.83 0V300" stroke="#f1f1f1" stroke-width="0.7"/><path d="M481.34 0V300" stroke="#f1f1f1" stroke-width="0.7"/><path d="M487.85 0V300" stroke="#f1f1f1" stroke-width="0.7"/><path d="M494.36 0V300" stroke="#f1f1f1" stroke-width="0.7"/><path d="M500.87 0V300" stroke="#f1f1f1" stroke-width="0.7"/><path d="M507.38 0V300" stroke="#f1f1f1" stroke-width="0.7"/><path d="M513.89 0V300" stroke="#f1f1f1" stroke-width="0.7"/><path d="M520.40 0V300" stroke="#f1f1f1" stroke-width="0.7"/><path d="M526.91 0V300" stroke="#f1f1f1" stroke-width="0.7"/><path d="M533.42 0V300" stroke="#f1f1f1" stroke-width="0.7"/><path d="M539.93 0V300" stroke="#f1f1f1" stroke-width="0.7"/><path d="M546.44 0V300" stroke="#f1f1f1" stroke-width="0.7"/><path d="M552.95 0V300" stroke="#f1f1f1" stroke-width="0.7"/><path d="M559.46 0V300" stroke="#f1f1f1" stroke-width="0.7"/><path d="M565.97 0V300" stroke="#f1f1f1" stroke-width="0.7"/><path d="M572.48 0V300" stroke="#f1f1f1" stroke-width="0.7"/><path d="M578.99 0V300" stroke="#f1f1f1" stroke-width="0.7"/><path d="M585.50 0V300" stroke="#f1f1f1" stroke-width="0.7"/><path d="M592.01 0V300" stroke="#f1f1f1" stroke-width="0.7"/><path d="M598.52 0V300" stroke="#f1f1f1" stroke-width="0.7"/><path d="M605.03 0V300" stroke="#f1f1f1" stroke-width="0.7"/><path d="M611.54 0V300" stroke="#f1f1f1" stroke-width="0.7"/><path d="M618.05 0V300" stroke="#f1f1f1" stroke-width="0.7"/><path d="M624.56 0V300" stroke="#f1f1f1" stroke-width="0.7"/><path d="M631.07 0V300" stroke="#f1f1f1" stroke-width="0.7"/><path d="M637.58 0V300" stroke="#f1f1f1" stroke-width="0.7"/><path d="M644.09 0V300" stroke="#f1f1f1" stroke-width="0.7"/><path d="M650.60 0V300" stroke="#f1f1f1" stroke-width="0.7"/><path d="M657.11 0V300" stroke="#f1f1f1" stroke-width="0.7"/><path d="M663.62 0V300" stroke="#f1f1f1" stroke-width="0.7"/><path d="M0 0.00H670" stroke="#f1f1f1" stroke-width="0.7"/><path d="M0 6.51H670" stroke="#f1f1f1" stroke-width="0.7"/><path d="M0 13.02H670" stroke="#f1f1f1" stroke-width="0.7"/><path d="M0 19.53H670" stroke="#f1f1f1" stroke-width="0.7"/><path d="M0 26.04H670" stroke="#f1f1f1" stroke-width="0.7"/><path d="M0 32.55H670" stroke="#f1f1f1" stroke-width="0.7"/><path d="M0 39.06H670" stroke="#f1f1f1" stroke-width="0.7"/><path d="M0 45.57H670" stroke="#f1f1f1" stroke-width="0.7"/><path d="M0 52.08H670" stroke="#f1f1f1" stroke-width="0.7"/><path d="M0 58.59H670" stroke="#f1f1f1" stroke-width="0.7"/><path d="M0 65.10H670" stroke="#f1f1f1" stroke-width="0.7"/><path d="M0 71.61H670" stroke="#f1f1f1" stroke-width="0.7"/><path d="M0 78.12H670" stroke="#f1f1f1" stroke-width="0.7"/><path d="M0 84.63H670" stroke="#f1f1f1" stroke-width="0.7"/><path d="M0 91.14H670" stroke="#f1f1f1" stroke-width="0.7"/><path d="M0 97.65H670" stroke="#f1f1f1" stroke-width="0.7"/><path d="M0 104.16H670" stroke="#f1f1f1" stroke-width="0.7"/><path d="M0 110.67H670" stroke="#f1f1f1" stroke-width="0.7"/><path d="M0 117.18H670" stroke="#f1f1f1" stroke-width="0.7"/><path d="M0 123.69H670" stroke="#f1f1f1" stroke-width="0.7"/><path d="M0 130.20H670" stroke="#f1f1f1" stroke-width="0.7"/><path d="M0 136.71H670" stroke="#f1f1f1" stroke-width="0.7"/><path d="M0 143.22H670" stroke="#f1f1f1" stroke-width="0.7"/><path d="M0 149.73H670" stroke="#f1f1f1" stroke-width="0.7"/><path d="M0 156.24H670" stroke="#f1f1f1" stroke-width="0.7"/><path d="M0 162.75H670" stroke="#f1f1f1" stroke-width="0.7"/><path d="M0 169.26H670" stroke="#f1f1f1" stroke-width="0.7"/><path d="M0 175.77H670" stroke="#f1f1f1" stroke-width="0.7"/><path d="M0 182.28H670" stroke="#f1f1f1" stroke-width="0.7"/><path d="M0 188.79H670" stroke="#f1f1f1" stroke-width="0.7"/><path d="M0 195.30H670" stroke="#f1f1f1" stroke-width="0.7"/><path d="M0 201.81H670" stroke="#f1f1f1" stroke-width="0.7"/><path d="M0 208.32H670" stroke="#f1f1f1" stroke-width="0.7"/><path d="M0 214.83H670" stroke="#f1f1f1" stroke-width="0.7"/><path d="M0 221.34H670" stroke="#f1f1f1" stroke-width="0.7"/><path d="M0 227.85H670" stroke="#f1f1f1" stroke-width="0.7"/><path d="M0 234.36H670" stroke="#f1f1f1" stroke-width="0.7"/><path d="M0 240.87H670" stroke="#f1f1f1" stroke-width="0.7"/><path d="M0 247.38H670" stroke="#f1f1f1" stroke-width="0.7"/><path d="M0 253.89H670" stroke="#f1f1f1" stroke-width="0.7"/><path d="M0 260.40H670" stroke="#f1f1f1" stroke-width="0.7"/><path d="M0 266.91H670" stroke="#f1f1f1" stroke-width="0.7"/><path d="M0 273.42H670" stroke="#f1f1f1" stroke-width="0.7"/><path d="M0 279.93H670" stroke="#f1f1f1" stroke-width="0.7"/><path d="M0 286.44H670" stroke="#f1f1f1" stroke-width="0.7"/><path d="M0 292.95H670" stroke="#f1f1f1" stroke-width="0.7"/><path d="M0 299.46H670" stroke="#f1f1f1" stroke-width="0.7"/><path d="M0 0.5H670M0.5 0V300" stroke="#cdcdcd" stroke-width="0.8" stroke-dasharray="3.6 3.5" fill="none"/></svg>
<div class="a" style="left:783.3px;top:501.1px;width:332px;height:78.7px;background:#d9d9d9;border:1px solid #555;border-radius:7px"></div>
<div class="a" style="left:799px;top:514px;width:99.5px;height:27.5px;background:#ff9999;border:1px solid #474747"></div>
<div class="t" style="left:811.5px;top:522.26px;font-size:11.8px;color:#111">Target Name</div>
<div class="a" style="left:897.5px;top:514px;width:205.5px;height:27.5px;background:#fff;border:1px solid #474747"></div>
<div class="t" style="left:897.5px;width:205.5px;text-align:center;top:524.1999999999999px;font-size:9px;color:#222">Target #00001</div>
<div class="a" style="left:799px;top:540.5px;width:99.5px;height:28.5px;background:#99ccff;border:1px solid #474747"></div>
<div class="t" style="left:811.5px;top:549.26px;font-size:11.8px;color:#111">Sample Name</div>
<div class="a" style="left:897.5px;top:540.5px;width:205.5px;height:28.5px;background:#fff;border:1px solid #474747"></div>
<div class="t" style="left:897.5px;width:205.5px;text-align:center;top:551.1999999999999px;font-size:9px;color:#222">Sample #00003</div>
<div class="a" style="left:783.3px;top:593px;width:332px;height:220px;background:#d9d9d9;border:1px solid #555;border-radius:7px"></div>
<div class="a" style="left:897.5px;top:611.5px;width:104.0px;height:27.0px;background:#ff9999;border:1px solid #474747"></div>
<div class="t" style="left:897.5px;width:104.0px;text-align:center;top:619.91px;font-size:11.8px;color:#111">Target Name</div>
<div class="a" style="left:1000.5px;top:611.5px;width:103.5px;height:27.0px;background:#99ccff;border:1px solid #474747"></div>
<div class="t" style="left:1000.5px;width:103.5px;text-align:center;top:619.91px;font-size:11.8px;color:#111">Sample Name</div>
<div class="a" style="left:795.5px;top:637.5px;width:103.0px;height:27.5px;background:#d9d9d9;border:1px solid #474747"></div>
<div class="t" style="left:795.5px;width:103.0px;text-align:center;top:648.03px;font-size:8.4px;color:#222">L* (SCI)</div>
<div class="a" style="left:897.5px;top:637.5px;width:104.0px;height:27.5px;background:#fff;border:1px solid #474747"></div>
<div class="t" style="left:897.5px;width:104.0px;text-align:center;top:647.92px;font-size:8.6px;color:#222">57.15</div>
<div class="a" style="left:1000.5px;top:637.5px;width:103.5px;height:27.5px;background:#fff;border:1px solid #474747"></div>
<div class="t" style="left:1000.5px;width:103.5px;text-align:center;top:647.92px;font-size:8.6px;color:#222">57.15</div>
<div class="a" style="left:795.5px;top:664px;width:103.0px;height:27px;background:#d9d9d9;border:1px solid #474747"></div>
<div class="t" style="left:795.5px;width:103.0px;text-align:center;top:674.28px;font-size:8.4px;color:#222">a* (SCI)</div>
<div class="a" style="left:897.5px;top:664px;width:104.0px;height:27px;background:#fff;border:1px solid #474747"></div>
<div class="t" style="left:897.5px;width:104.0px;text-align:center;top:674.17px;font-size:8.6px;color:#222">-28.20</div>
<div class="a" style="left:1000.5px;top:664px;width:103.5px;height:27px;background:#fff;border:1px solid #474747"></div>
<div class="t" style="left:1000.5px;width:103.5px;text-align:center;top:674.17px;font-size:8.6px;color:#222">-28.19</div>
<div class="a" style="left:795.5px;top:690px;width:103.0px;height:26.5px;background:#d9d9d9;border:1px solid #474747"></div>
<div class="t" style="left:795.5px;width:103.0px;text-align:center;top:700.03px;font-size:8.4px;color:#222">b* (SCI)</div>
<div class="a" style="left:897.5px;top:690px;width:104.0px;height:26.5px;background:#fff;border:1px solid #474747"></div>
<div class="t" style="left:897.5px;width:104.0px;text-align:center;top:699.92px;font-size:8.6px;color:#222">14.56</div>
<div class="a" style="left:1000.5px;top:690px;width:103.5px;height:26.5px;background:#fff;border:1px solid #474747"></div>
<div class="t" style="left:1000.5px;width:103.5px;text-align:center;top:699.92px;font-size:8.6px;color:#222">14.55</div>
<div class="a" style="left:897.5px;top:734.5px;width:205.0px;height:27.0px;background:#d9d9d9;border:1px solid #474747"></div>
<div class="t" style="left:897.5px;width:205.0px;text-align:center;top:742.91px;font-size:11.8px;color:#111">Different</div>
<div class="a" style="left:799px;top:760.5px;width:99.5px;height:26.5px;background:#d9d9d9;border:1px solid #474747"></div>
<div class="t" style="left:799px;width:99.5px;text-align:center;top:770.53px;font-size:8.4px;color:#222">ΔL* (SCI)</div>
<div class="a" style="left:897.5px;top:760.5px;width:205.0px;height:26.5px;background:#fff;border:1px solid #474747"></div>
<div class="t" style="left:897.5px;width:205.0px;text-align:center;top:770.42px;font-size:8.6px;color:#222">0.00</div>
<div class="t" style="left:1126.5px;width:60px;text-align:right;top:522.835px;font-size:10.3px;color:#525252;letter-spacing:-0.1px">70.00</div>
<div class="a" style="left:1190px;top:527.3000000000001px;width:3px;height:0.8px;background:#bbb"></div>
<div class="t" style="left:1126.5px;width:60px;text-align:right;top:572.2683333333333px;font-size:10.3px;color:#525252;letter-spacing:-0.1px">60.00</div>
<div class="a" style="left:1190px;top:576.7333333333333px;width:3px;height:0.8px;background:#bbb"></div>
<div class="t" style="left:1126.5px;width:60px;text-align:right;top:621.7016666666667px;font-size:10.3px;color:#525252;letter-spacing:-0.1px">50.00</div>
<div class="a" style="left:1190px;top:626.1666666666667px;width:3px;height:0.8px;background:#bbb"></div>
<div class="t" style="left:1126.5px;width:60px;text-align:right;top:671.135px;font-size:10.3px;color:#525252;letter-spacing:-0.1px">40.00</div>
<div class="a" style="left:1190px;top:675.6px;width:3px;height:0.8px;background:#bbb"></div>
<div class="a" style="left:1193.5px;top:527.7px;width:18px;height:148.29999999999995px;background:linear-gradient(#f8f8f8,#000);border:1px solid #d0d0d0;border-bottom:none"></div>
<div class="a" style="left:1199.5px;top:540.0px;width:5px;height:5px;background:#c4c4c4"></div>
<div class="a" style="left:1199.5px;top:555.8px;width:5px;height:5px;background:#d8d8d8"></div>
<div class="a" style="left:1199.5px;top:574.5px;width:5px;height:5px;background:#d8d8d8"></div>
<div class="a" style="left:1199.5px;top:593.8px;width:5px;height:5px;background:#dcdcdc"></div>
<div class="a" style="left:1199.5px;top:646.2px;width:5px;height:5px;background:#e0e0e0"></div>
<div class="a" style="left:1199.5px;top:588.5px;width:5px;height:5px;background:#e00000"></div>
<div class="t" style="left:1108.5px;width:80px;text-align:center;top:595.79px;font-size:12.2px;color:#525252;transform:rotate(-90deg);transform-origin:40px 6.71px">L* [ SCI ]</div>
<div class="t" style="left:1189px;width:80px;text-align:center;top:595.79px;font-size:12.2px;color:#525252;transform:rotate(-90deg);transform-origin:40px 6.71px">b* [ SCI ]</div>
<div class="a" style="left:1283.4px;top:527.7px;width:140.5999999999999px;height:148.29999999999995px;border-radius:50%;background:radial-gradient(ellipse at center, rgba(212,212,212,1) 0%, rgba(205,205,205,0.55) 30%, rgba(190,190,190,0.12) 60%, rgba(180,180,180,0) 80%),conic-gradient(from 0deg, #c4c200 0deg, #cc6c14 45deg, #d00a14 90deg, #7a0a6a 135deg, #1408c4 180deg, #0c4e5a 225deg, #12bc16 270deg, #74c010 315deg, #c4c200 360deg)"></div>
<svg class="a" style="left:0;top:0" width="1440" height="783" viewBox="0 0 1440 783"><path d="M1283.5 527.7V681" stroke="#1a1a1a" stroke-width="1"/><path d="M1279.9 527.5H1424" stroke="#1a1a1a" stroke-width="1"/><path d="M1300.5 527.7V681" stroke="#1a1a1a" stroke-width="1"/><path d="M1279.9 546.5H1424" stroke="#1a1a1a" stroke-width="1"/><path d="M1318.5 527.7V681" stroke="#1a1a1a" stroke-width="1"/><path d="M1279.9 564.5H1424" stroke="#1a1a1a" stroke-width="1"/><path d="M1336.5 527.7V681" stroke="#1a1a1a" stroke-width="1"/><path d="M1279.9 583.5H1424" stroke="#1a1a1a" stroke-width="1"/><path d="M1353.5 527.7V681" stroke="#1a1a1a" stroke-width="1"/><path d="M1279.9 601.5H1424" stroke="#1a1a1a" stroke-width="1"/><path d="M1371.5 527.7V681" stroke="#1a1a1a" stroke-width="1"/><path d="M1279.9 620.5H1424" stroke="#1a1a1a" stroke-width="1"/><path d="M1388.5 527.7V681" stroke="#1a1a1a" stroke-width="1"/><path d="M1279.9 638.5H1424" stroke="#1a1a1a" stroke-width="1"/><path d="M1406.5 527.7V681" stroke="#1a1a1a" stroke-width="1"/><path d="M1279.9 657.5H1424" stroke="#1a1a1a" stroke-width="1"/><path d="M1424.5 527.7V681" stroke="#1a1a1a" stroke-width="1"/><path d="M1279.9 676.5H1424" stroke="#1a1a1a" stroke-width="1"/></svg>
<div class="t" style="left:1215px;width:60px;text-align:right;top:522.835px;font-size:10.3px;color:#525252;letter-spacing:-0.1px">100.00</div>
<div class="t" style="left:1215px;width:60px;text-align:right;top:541.3725000000001px;font-size:10.3px;color:#525252;letter-spacing:-0.1px">75.00</div>
<div class="t" style="left:1215px;width:60px;text-align:right;top:559.9100000000001px;font-size:10.3px;color:#525252;letter-spacing:-0.1px">50.00</div>
<div class="t" style="left:1215px;width:60px;text-align:right;top:578.4475px;font-size:10.3px;color:#525252;letter-spacing:-0.1px">25.00</div>
<div class="t" style="left:1215px;width:60px;text-align:right;top:596.985px;font-size:10.3px;color:#525252;letter-spacing:-0.1px">0.00</div>
<div class="t" style="left:1215px;width:60px;text-align:right;top:615.5225px;font-size:10.3px;color:#525252;letter-spacing:-0.1px">-25.00</div>
<div class="t" style="left:1215px;width:60px;text-align:right;top:634.06px;font-size:10.3px;color:#525252;letter-spacing:-0.1px">-50.00</div>
<div class="t" style="left:1215px;width:60px;text-align:right;top:652.5975px;font-size:10.3px;color:#525252;letter-spacing:-0.1px">-75.00</div>
<div class="t" style="left:1215px;width:60px;text-align:right;top:671.135px;font-size:10.3px;color:#525252;letter-spacing:-0.1px">-100.00</div>
<div class="t" style="left:1243px;width:80px;text-align:center;top:684.635px;font-size:10.3px;color:#525252;letter-spacing:-0.3px">-100.00</div>
<div class="t" style="left:1297px;width:80px;text-align:center;top:684.635px;font-size:10.3px;color:#525252;letter-spacing:-0.3px">-25.00</div>
<div class="t" style="left:1370.5px;width:80px;text-align:center;top:684.635px;font-size:10.3px;color:#525252;letter-spacing:-0.3px">100.00</div>
<div class="t" style="left:1313px;width:80px;text-align:center;top:702.89px;font-size:12.2px;color:#525252;letter-spacing:-0.3px">a* [ SCI ]</div>
<div class="a" style="left:1322.4px;top:593.8px;width:5px;height:5px;background:#d8d8d8"></div>
<div class="a" style="left:1343.9px;top:589.9px;width:5px;height:5px;background:#d8d8d8"></div>
<div class="a" style="left:1366.5px;top:596.9px;width:5px;height:5px;background:#d8d8d8"></div>
<div class="a" style="left:1338.7px;top:619.0px;width:5px;height:5px;background:#d8d8d8"></div>
<div class="a" style="left:1349.6px;top:615.9px;width:5px;height:5px;background:#d8d8d8"></div>
<div class="a" style="left:1355.0px;top:553.3px;width:5px;height:5px;background:#d8d8d8"></div>
<div class="a" style="left:1378.5px;top:563.0px;width:5px;height:5px;background:#d8d8d8"></div>
<div class="a" style="left:1330.7px;top:588.7px;width:5px;height:5px;background:#e00000"></div>
<div class="t" style="left:1137.5px;width:60px;text-align:right;top:733.335px;font-size:10.3px;color:#525252;letter-spacing:-0.1px">20.00</div>
<div class="t" style="left:1137.5px;width:60px;text-align:right;top:769.135px;font-size:10.3px;color:#525252;letter-spacing:-0.1px">10.00</div>
<div class="a" style="left:1204px;top:738px;width:11.5px;height:50px;background:linear-gradient(#f6f6f6,#bbb);border:1px solid #d8d8d8"></div>
<div class="a" style="left:1207px;top:771px;width:5.5px;height:14px;background:#c4c4c4"></div>
<div class="t" style="left:1213.5px;width:60px;text-align:right;top:733.135px;font-size:10.3px;color:#525252;letter-spacing:-0.1px">80.00</div>
<div class="t" style="left:1213.5px;width:60px;text-align:right;top:751.435px;font-size:10.3px;color:#525252;letter-spacing:-0.1px">60.00</div>
<div class="t" style="left:1213.5px;width:60px;text-align:right;top:769.135px;font-size:10.3px;color:#525252;letter-spacing:-0.1px">40.00</div>
<div class="a" style="left:1278.7px;top:738px;width:138.29999999999995px;height:50px;background:#fff"></div>
<svg class="a" style="left:0;top:0" width="1440" height="783" viewBox="0 0 1440 783"><path d="M1278.5 738V783" stroke="#333" stroke-width="1"/><path d="M1295.5 738V783" stroke="#333" stroke-width="1"/><path d="M1313.5 738V783" stroke="#333" stroke-width="1"/><path d="M1330.5 738V783" stroke="#333" stroke-width="1"/><path d="M1347.5 738V783" stroke="#333" stroke-width="1"/><path d="M1365.5 738V783" stroke="#333" stroke-width="1"/><path d="M1382.5 738V783" stroke="#333" stroke-width="1"/><path d="M1399.5 738V783" stroke="#333" stroke-width="1"/><path d="M1417.5 738V783" stroke="#333" stroke-width="1"/><path d="M1275.7 756.5H1417" stroke="#333" stroke-width="1"/><path d="M1275.7 774.5H1417" stroke="#333" stroke-width="1"/><path d="M1275.7 738.5H1417" stroke="#333" stroke-width="1"/><path d="M1278.7 738H1417" stroke="#fbe800" stroke-width="1.8"/><path d="M1278.7 738V783" stroke="#14a014" stroke-width="1.6"/><path d="M1417 738V783" stroke="#ee1010" stroke-width="1.6"/><path d="M1281 774.5L1298 783" stroke="#333" stroke-width="0.9"/><path d="M1281 774.5L1286 775M1281 774.5L1284 778" stroke="#333" stroke-width="0.9"/></svg>
<div class="a" style="left:1374.4px;top:764.9000000000001px;width:4.6px;height:4.6px;background:#d8d8d8"></div>
<div class="a" style="left:1403.0px;top:776.9000000000001px;width:4.6px;height:4.6px;background:#d8d8d8"></div>
<div class="a" style="left:1150.6px;top:781px;width:9.6px;height:3px;background:#555"></div>
<div class="a" style="left:1226.8px;top:781px;width:9.9px;height:3px;background:#555"></div>
<svg class="a" style="left:9px;top:77px" width="13" height="12" viewBox="0 0 13 12"><path d="M1.5 8.2L7.5 2.2Q8.8 1 10 2.2L11.2 3.4Q12.3 4.6 11.1 5.8L5.1 11Q4 11.8 3 11L1.5 9.5Q0.8 8.8 1.5 8.2Z" fill="none" stroke="#fff" stroke-width="1.1"/><path d="M2.5 7.3L5.6 10.4" stroke="#fff" stroke-width="0.9"/></svg>
<svg class="a" style="left:9.5px;top:103.5px" width="12" height="12" viewBox="0 0 12 12"><rect x="0.8" y="4.3" width="6.6" height="6.6" fill="none" stroke="#222" stroke-width="1"/><rect x="3.8" y="1" width="7.2" height="7.2" fill="#111"/><path d="M8.5 2.2L10 3.7M7.5 4L9.3 5.8" stroke="#fff" stroke-width=".7"/></svg>
<svg class="a" style="left:9.5px;top:125.5px" width="12" height="12" viewBox="0 0 12 12"><circle cx="6.8" cy="7" r="3.3" fill="none" stroke="#e463a5" stroke-width="2.2"/><path d="M1 3L3.5 0.8L5.3 2.8L3 4.8Z" fill="#f0a8cc"/></svg>
<svg class="a" style="left:8.5px;top:148.5px" width="12" height="12" viewBox="0 0 12 12"><circle cx="7" cy="7" r="3.2" fill="none" stroke="#1e6fd6" stroke-width="2.2"/><path d="M1 5L4.5 1.2L5.5 3.5L3.5 5.5Z" fill="#1e6fd6"/></svg>
<svg class="a" style="left:19.8px;top:146px" width="8" height="8" viewBox="0 0 8 8"><circle cx="4" cy="4" r="3.8" fill="#f5c518"/><path d="M4 1.8V4.6" stroke="#222" stroke-width="1"/><circle cx="4" cy="6" r=".55" fill="#222"/></svg>
<svg class="a" style="left:9px;top:170.5px" width="12" height="12" viewBox="0 0 12 12"><circle cx="5" cy="5.5" r="3.6" fill="none" stroke="#111" stroke-width="2"/><circle cx="8" cy="8" r="3" fill="#ddd" stroke="#444" stroke-width="1"/><circle cx="8" cy="8" r="1.2" fill="none" stroke="#555" stroke-width=".7"/></svg>
<svg class="a" style="left:19.8px;top:168.3px" width="8" height="8" viewBox="0 0 8 8"><circle cx="4" cy="4" r="3.8" fill="#f5c518"/><path d="M4 1.8V4.6" stroke="#222" stroke-width="1"/><circle cx="4" cy="6" r=".55" fill="#222"/></svg>
<svg class="a" style="left:9px;top:193.5px" width="12" height="12" viewBox="0 0 12 12"><circle cx="6" cy="6.5" r="3.6" fill="none" stroke="#111" stroke-width="2.2"/><path d="M5 2.5L9 1.5L9.5 6Z" fill="#111"/><path d="M1 1.5L11 11" stroke="#111" stroke-width="1"/></svg>
<svg class="a" style="left:10px;top:216.5px" width="11" height="12" viewBox="0 0 11 12"><rect x="1.5" y="5.5" width="3" height="6" rx="1.5" fill="none" stroke="#222" stroke-width="1"/><path d="M3 5.5V1" stroke="#222" stroke-width="1"/><rect x="6.3" y="3.5" width="3" height="8" rx="1.5" fill="none" stroke="#222" stroke-width="1"/><path d="M6.5 1.5L7.8 3.2L9.2 1.5" stroke="#222" stroke-width="1" fill="none"/></svg>
<div class="a" style="left:41.5px;top:82px;width:667.5px;height:1.2px;background:#dadada"></div>
<div class="a" style="left:711px;top:82px;width:726px;height:1.2px;background:#dadada"></div>
</body></html>
